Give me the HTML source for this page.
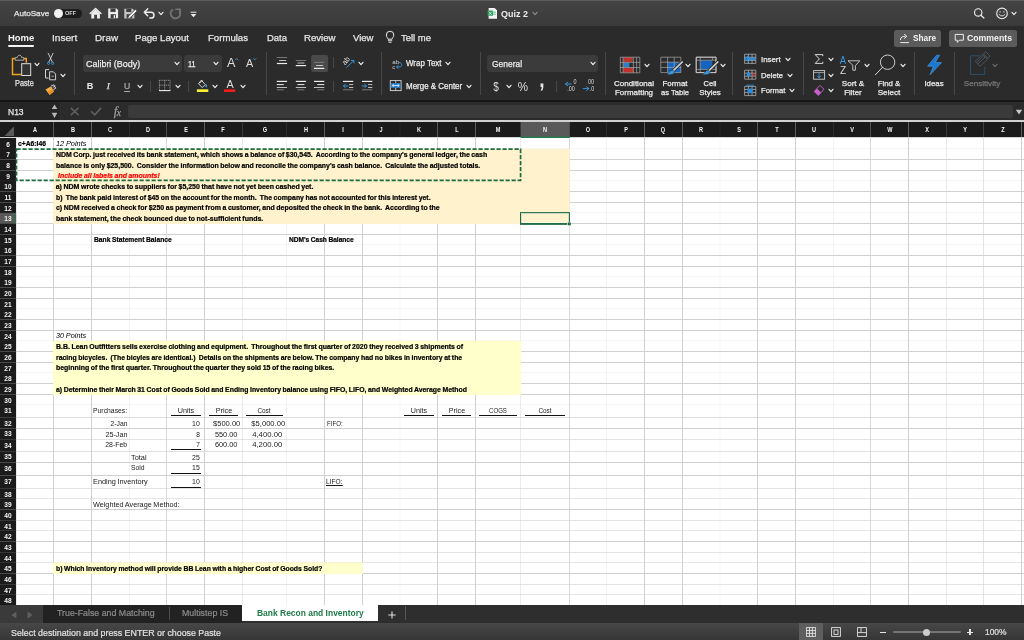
<!DOCTYPE html>
<html lang="en">
<head>
<meta charset="utf-8">
<title>Quiz 2 - Excel</title>
<style>
html,body{margin:0;padding:0;background:#2a2a2a;}
body{width:1024px;height:640px;overflow:hidden;position:relative;font-family:"Liberation Sans", sans-serif;}
#app{position:absolute;left:0;top:0;width:1024px;height:640px;overflow:hidden;will-change:transform;}
.r{position:absolute;display:block;box-sizing:border-box;}
.t{position:absolute;display:block;white-space:pre;margin:0;padding:0;}
</style>
</head>
<body>
<div id="app">
<div class="r" style="left:0.00px;top:0.00px;width:1024.00px;height:26.00px;background:linear-gradient(#444444,#3a3a3a);border-top:1px solid #5c5c5c;"></div>
<span class="t" id="t1" style="top:9.06px;left:13.75px;transform-origin:0 50%;height:10.27px;line-height:10.27px;font-size:7.90px;color:#e4e4e4;font-weight:400;transform:scaleX(1.0287);-webkit-text-stroke:0.25px #e4e4e4;">AutoSave</span>
<div class="r" style="left:53.80px;top:9.00px;width:28.40px;height:8.80px;background:#1d1d1d;border-radius:4.4px;"></div>
<div class="r" style="left:53.90px;top:9.00px;width:8.80px;height:8.80px;background:#f4f4f4;border-radius:4.4px;"></div>
<span class="t" id="t2" style="top:10.09px;left:64.80px;transform-origin:0 50%;height:7.02px;line-height:7.02px;font-size:5.40px;color:#d6d6d6;font-weight:700;transform:scaleX(1.0203);">OFF</span>
<span class="t" id="t3" style="top:8.06px;left:501.30px;transform-origin:0 50%;height:12.48px;line-height:12.48px;font-size:9.60px;color:#ececec;font-weight:700;transform:scaleX(0.9376);">Quiz 2</span>
<svg class="r" style="left:531.50px;top:10.80px;" width="6" height="5" viewBox="0 0 6 5"><path d="M1 1.3 L3 3.6 L5 1.3" fill="none" stroke="#8c8c8c" stroke-width="1.15" stroke-linecap="round" stroke-linejoin="round"/></svg>
<svg class="r" style="left:158.30px;top:11.00px;" width="6" height="5" viewBox="0 0 6 5"><path d="M1 1.3 L3 3.6 L5 1.3" fill="none" stroke="#f0f0f0" stroke-width="1.15" stroke-linecap="round" stroke-linejoin="round"/></svg>
<svg class="r" style="left:1010.90px;top:10.90px;" width="6" height="5" viewBox="0 0 6 5"><path d="M1 1.3 L3 3.6 L5 1.3" fill="none" stroke="#f0f0f0" stroke-width="1.15" stroke-linecap="round" stroke-linejoin="round"/></svg>
<div class="r" style="left:0.00px;top:26.00px;width:1024.00px;height:24.00px;background:#2b2b2b;"></div>
<span class="t" id="t4" style="top:32.46px;left:8.10px;transform-origin:0 50%;height:12.48px;line-height:12.48px;font-size:9.60px;color:#f2f2f2;font-weight:700;transform:scaleX(0.9866);">Home</span>
<span class="t" id="t5" style="top:32.46px;left:51.60px;transform-origin:0 50%;height:12.48px;line-height:12.48px;font-size:9.60px;color:#e6e6e6;font-weight:400;transform:scaleX(1.0542);-webkit-text-stroke:0.25px #e6e6e6;">Insert</span>
<span class="t" id="t6" style="top:32.46px;left:94.60px;transform-origin:0 50%;height:12.48px;line-height:12.48px;font-size:9.60px;color:#e6e6e6;font-weight:400;transform:scaleX(1.0272);-webkit-text-stroke:0.25px #e6e6e6;">Draw</span>
<span class="t" id="t7" style="top:32.46px;left:134.50px;transform-origin:0 50%;height:12.48px;line-height:12.48px;font-size:9.60px;color:#e6e6e6;font-weight:400;transform:scaleX(1.0020);-webkit-text-stroke:0.25px #e6e6e6;">Page Layout</span>
<span class="t" id="t8" style="top:32.46px;left:207.50px;transform-origin:0 50%;height:12.48px;line-height:12.48px;font-size:9.60px;color:#e6e6e6;font-weight:400;transform:scaleX(1.0004);-webkit-text-stroke:0.25px #e6e6e6;">Formulas</span>
<span class="t" id="t9" style="top:32.46px;left:266.50px;transform-origin:0 50%;height:12.48px;line-height:12.48px;font-size:9.60px;color:#e6e6e6;font-weight:400;transform:scaleX(0.9869);-webkit-text-stroke:0.25px #e6e6e6;">Data</span>
<span class="t" id="t10" style="top:32.46px;left:303.50px;transform-origin:0 50%;height:12.48px;line-height:12.48px;font-size:9.60px;color:#e6e6e6;font-weight:400;transform:scaleX(1.0010);-webkit-text-stroke:0.25px #e6e6e6;">Review</span>
<span class="t" id="t11" style="top:32.46px;left:352.50px;transform-origin:0 50%;height:12.48px;line-height:12.48px;font-size:9.60px;color:#e6e6e6;font-weight:400;transform:scaleX(0.9939);-webkit-text-stroke:0.25px #e6e6e6;">View</span>
<span class="t" id="t12" style="top:32.46px;left:401.00px;transform-origin:0 50%;height:12.48px;line-height:12.48px;font-size:9.60px;color:#e6e6e6;font-weight:400;transform:scaleX(0.9871);-webkit-text-stroke:0.25px #e6e6e6;">Tell me</span>
<div class="r" style="left:8.10px;top:44.70px;width:26.30px;height:2.10px;background:#f4f4f4;border-radius:1px;"></div>
<div class="r" style="left:894.30px;top:30.40px;width:47.00px;height:16.30px;background:#5b5b5b;border-radius:2.5px;"></div>
<span class="t" id="t13" style="top:32.91px;left:913.20px;transform-origin:0 50%;height:11.18px;line-height:11.18px;font-size:8.60px;color:#f4f4f4;font-weight:700;transform:scaleX(0.9627);">Share</span>
<div class="r" style="left:948.90px;top:30.40px;width:67.80px;height:16.30px;background:#5b5b5b;border-radius:2.5px;"></div>
<span class="t" id="t14" style="top:32.91px;left:967.20px;transform-origin:0 50%;height:11.18px;line-height:11.18px;font-size:8.60px;color:#f4f4f4;font-weight:700;transform:scaleX(1.0130);">Comments</span>
<div class="r" style="left:0.00px;top:50.00px;width:1024.00px;height:50.50px;background:#2b2b2b;"></div>
<div class="r" style="left:0.00px;top:100.00px;width:1024.00px;height:2.00px;background:#161616;"></div>
<div class="r" style="left:74.00px;top:52.00px;width:1.00px;height:42.50px;background:#474747;"></div>
<div class="r" style="left:266.00px;top:52.00px;width:1.00px;height:42.50px;background:#474747;"></div>
<div class="r" style="left:381.00px;top:52.00px;width:1.00px;height:42.50px;background:#474747;"></div>
<div class="r" style="left:479.90px;top:52.00px;width:1.00px;height:42.50px;background:#474747;"></div>
<div class="r" style="left:605.00px;top:52.00px;width:1.00px;height:42.50px;background:#474747;"></div>
<div class="r" style="left:731.70px;top:52.00px;width:1.00px;height:42.50px;background:#474747;"></div>
<div class="r" style="left:803.00px;top:52.00px;width:1.00px;height:42.50px;background:#474747;"></div>
<div class="r" style="left:914.10px;top:52.00px;width:1.00px;height:42.50px;background:#474747;"></div>
<div class="r" style="left:954.00px;top:52.00px;width:1.00px;height:42.50px;background:#474747;"></div>
<div class="r" style="left:150.00px;top:80.50px;width:1.00px;height:11.50px;background:#474747;"></div>
<div class="r" style="left:187.50px;top:80.50px;width:1.00px;height:11.50px;background:#474747;"></div>
<div class="r" style="left:333.00px;top:80.50px;width:1.00px;height:11.50px;background:#474747;"></div>
<div class="r" style="left:555.70px;top:80.50px;width:1.00px;height:11.50px;background:#474747;"></div>
<div class="r" style="left:333.00px;top:56.50px;width:1.00px;height:11.50px;background:#474747;"></div>
<svg class="r" style="left:33.90px;top:62.30px;" width="6" height="5" viewBox="0 0 6 5"><path d="M1 1.3 L3 3.6 L5 1.3" fill="none" stroke="#f0f0f0" stroke-width="1.15" stroke-linecap="round" stroke-linejoin="round"/></svg>
<svg class="r" style="left:59.60px;top:72.50px;" width="6" height="5" viewBox="0 0 6 5"><path d="M1 1.3 L3 3.6 L5 1.3" fill="none" stroke="#f0f0f0" stroke-width="1.15" stroke-linecap="round" stroke-linejoin="round"/></svg>
<span class="t" id="t15" style="top:78.67px;left:14.50px;transform-origin:0 50%;height:10.66px;line-height:10.66px;font-size:8.20px;color:#e4e4e4;font-weight:400;transform:scaleX(0.8931);-webkit-text-stroke:0.25px #e4e4e4;">Paste</span>
<div class="r" style="left:82.50px;top:55.20px;width:99.00px;height:16.40px;background:#3b3b3b;border-radius:3px;"></div>
<span class="t" id="t16" style="top:58.72px;left:86.30px;transform-origin:0 50%;height:11.96px;line-height:11.96px;font-size:9.20px;color:#ececec;font-weight:400;transform:scaleX(0.9738);-webkit-text-stroke:0.25px #ececec;">Calibri (Body)</span>
<svg class="r" style="left:173.50px;top:61.30px;" width="6" height="5" viewBox="0 0 6 5"><path d="M1 1.3 L3 3.6 L5 1.3" fill="none" stroke="#f0f0f0" stroke-width="1.15" stroke-linecap="round" stroke-linejoin="round"/></svg>
<div class="r" style="left:183.60px;top:55.20px;width:38.00px;height:16.40px;background:#3b3b3b;border-radius:3px;"></div>
<span class="t" id="t17" style="top:58.72px;left:188.00px;transform-origin:0 50%;height:11.96px;line-height:11.96px;font-size:9.20px;color:#ececec;font-weight:400;transform:scaleX(0.7856);-webkit-text-stroke:0.25px #ececec;">11</span>
<svg class="r" style="left:213.00px;top:61.30px;" width="6" height="5" viewBox="0 0 6 5"><path d="M1 1.3 L3 3.6 L5 1.3" fill="none" stroke="#f0f0f0" stroke-width="1.15" stroke-linecap="round" stroke-linejoin="round"/></svg>
<span class="t" id="t18" style="top:81.32px;left:90.00px;transform-origin:50% 50%;height:11.96px;line-height:11.96px;font-size:9.20px;color:#e8e8e8;font-weight:700;transform:translateX(-50%) scaleX(1.0000);">B</span>
<span class="t" id="t19" style="top:81.32px;left:108.20px;transform-origin:50% 50%;height:11.96px;line-height:11.96px;font-size:9.20px;color:#e0e0e0;font-weight:400;font-style:italic;transform:translateX(-50%) scaleX(1.0000);-webkit-text-stroke:0.25px #e0e0e0;font-family:'Liberation Serif',serif;">I</span>
<span class="t" id="t20" style="top:81.41px;left:127.00px;transform-origin:50% 50%;height:11.18px;line-height:11.18px;font-size:8.60px;color:#a8a8a8;font-weight:400;transform:translateX(-50%) scaleX(1.0000);-webkit-text-stroke:0.25px #a8a8a8;">U</span>
<div class="r" style="left:123.70px;top:90.60px;width:6.60px;height:0.80px;background:#a8a8a8;"></div>
<svg class="r" style="left:137.00px;top:84.00px;" width="6" height="5" viewBox="0 0 6 5"><path d="M1 1.3 L3 3.6 L5 1.3" fill="none" stroke="#f0f0f0" stroke-width="1.15" stroke-linecap="round" stroke-linejoin="round"/></svg>
<svg class="r" style="left:174.80px;top:84.00px;" width="6" height="5" viewBox="0 0 6 5"><path d="M1 1.3 L3 3.6 L5 1.3" fill="none" stroke="#f0f0f0" stroke-width="1.15" stroke-linecap="round" stroke-linejoin="round"/></svg>
<svg class="r" style="left:212.00px;top:84.00px;" width="6" height="5" viewBox="0 0 6 5"><path d="M1 1.3 L3 3.6 L5 1.3" fill="none" stroke="#f0f0f0" stroke-width="1.15" stroke-linecap="round" stroke-linejoin="round"/></svg>
<svg class="r" style="left:239.50px;top:84.00px;" width="6" height="5" viewBox="0 0 6 5"><path d="M1 1.3 L3 3.6 L5 1.3" fill="none" stroke="#f0f0f0" stroke-width="1.15" stroke-linecap="round" stroke-linejoin="round"/></svg>
<span class="t" id="t21" style="top:59.17px;left:406.00px;transform-origin:0 50%;height:10.66px;line-height:10.66px;font-size:8.20px;color:#ececec;font-weight:400;transform:scaleX(0.9709);-webkit-text-stroke:0.25px #ececec;">Wrap Text</span>
<svg class="r" style="left:445.00px;top:61.30px;" width="6" height="5" viewBox="0 0 6 5"><path d="M1 1.3 L3 3.6 L5 1.3" fill="none" stroke="#f0f0f0" stroke-width="1.15" stroke-linecap="round" stroke-linejoin="round"/></svg>
<span class="t" id="t22" style="top:81.97px;left:406.00px;transform-origin:0 50%;height:10.66px;line-height:10.66px;font-size:8.20px;color:#ececec;font-weight:400;transform:scaleX(0.9724);-webkit-text-stroke:0.25px #ececec;">Merge &amp; Center</span>
<svg class="r" style="left:465.50px;top:84.00px;" width="6" height="5" viewBox="0 0 6 5"><path d="M1 1.3 L3 3.6 L5 1.3" fill="none" stroke="#f0f0f0" stroke-width="1.15" stroke-linecap="round" stroke-linejoin="round"/></svg>
<svg class="r" style="left:358.00px;top:61.30px;" width="6" height="5" viewBox="0 0 6 5"><path d="M1 1.3 L3 3.6 L5 1.3" fill="none" stroke="#f0f0f0" stroke-width="1.15" stroke-linecap="round" stroke-linejoin="round"/></svg>
<div class="r" style="left:487.40px;top:55.20px;width:110.20px;height:16.40px;background:#3b3b3b;border-radius:3px;"></div>
<span class="t" id="t23" style="top:58.72px;left:492.00px;transform-origin:0 50%;height:11.96px;line-height:11.96px;font-size:9.20px;color:#ececec;font-weight:400;transform:scaleX(0.9178);-webkit-text-stroke:0.25px #ececec;">General</span>
<svg class="r" style="left:589.50px;top:61.30px;" width="6" height="5" viewBox="0 0 6 5"><path d="M1 1.3 L3 3.6 L5 1.3" fill="none" stroke="#f0f0f0" stroke-width="1.15" stroke-linecap="round" stroke-linejoin="round"/></svg>
<span class="t" id="t24" style="top:78.22px;left:495.50px;transform-origin:50% 50%;height:17.55px;line-height:17.55px;font-size:13.50px;color:#dcdcdc;font-weight:400;transform:translateX(-50%) scaleX(0.7400);-webkit-text-stroke:0;">$</span>
<svg class="r" style="left:505.80px;top:84.00px;" width="6" height="5" viewBox="0 0 6 5"><path d="M1 1.3 L3 3.6 L5 1.3" fill="none" stroke="#f0f0f0" stroke-width="1.15" stroke-linecap="round" stroke-linejoin="round"/></svg>
<span class="t" id="t25" style="top:77.62px;left:523.10px;transform-origin:50% 50%;height:17.16px;line-height:17.16px;font-size:13.20px;color:#dcdcdc;font-weight:400;transform:translateX(-50%) scaleX(0.8800);-webkit-text-stroke:0;">%</span>
<span class="t" id="t26" style="top:64.60px;left:541.80px;transform-origin:50% 50%;height:28.00px;line-height:28.00px;font-size:24.00px;color:#e4e4e4;font-weight:700;transform:translateX(-50%) scaleX(0.8000);">,</span>
<span class="t" id="t27" style="top:79.10px;left:634.20px;transform-origin:50% 50%;height:10.40px;line-height:10.40px;font-size:8.00px;color:#ececec;font-weight:400;transform:translateX(-50%) scaleX(0.9992);-webkit-text-stroke:0.25px #ececec;">Conditional</span>
<span class="t" id="t28" style="top:87.60px;left:634.20px;transform-origin:50% 50%;height:10.40px;line-height:10.40px;font-size:8.00px;color:#ececec;font-weight:400;transform:translateX(-50%) scaleX(0.9939);-webkit-text-stroke:0.25px #ececec;">Formatting</span>
<svg class="r" style="left:643.80px;top:62.50px;" width="6" height="5" viewBox="0 0 6 5"><path d="M1 1.3 L3 3.6 L5 1.3" fill="none" stroke="#f0f0f0" stroke-width="1.15" stroke-linecap="round" stroke-linejoin="round"/></svg>
<span class="t" id="t29" style="top:79.10px;left:674.60px;transform-origin:50% 50%;height:10.40px;line-height:10.40px;font-size:8.00px;color:#ececec;font-weight:400;transform:translateX(-50%) scaleX(0.9864);-webkit-text-stroke:0.25px #ececec;">Format</span>
<span class="t" id="t30" style="top:87.60px;left:674.60px;transform-origin:50% 50%;height:10.40px;line-height:10.40px;font-size:8.00px;color:#ececec;font-weight:400;transform:translateX(-50%) scaleX(0.9509);-webkit-text-stroke:0.25px #ececec;">as Table</span>
<svg class="r" style="left:685.00px;top:62.50px;" width="6" height="5" viewBox="0 0 6 5"><path d="M1 1.3 L3 3.6 L5 1.3" fill="none" stroke="#f0f0f0" stroke-width="1.15" stroke-linecap="round" stroke-linejoin="round"/></svg>
<span class="t" id="t31" style="top:79.10px;left:710.00px;transform-origin:50% 50%;height:10.40px;line-height:10.40px;font-size:8.00px;color:#ececec;font-weight:400;transform:translateX(-50%) scaleX(0.9433);-webkit-text-stroke:0.25px #ececec;">Cell</span>
<span class="t" id="t32" style="top:87.60px;left:710.00px;transform-origin:50% 50%;height:10.40px;line-height:10.40px;font-size:8.00px;color:#ececec;font-weight:400;transform:translateX(-50%) scaleX(0.9864);-webkit-text-stroke:0.25px #ececec;">Styles</span>
<svg class="r" style="left:720.00px;top:62.50px;" width="6" height="5" viewBox="0 0 6 5"><path d="M1 1.3 L3 3.6 L5 1.3" fill="none" stroke="#f0f0f0" stroke-width="1.15" stroke-linecap="round" stroke-linejoin="round"/></svg>
<span class="t" id="t33" style="top:55.10px;left:760.80px;transform-origin:0 50%;height:10.40px;line-height:10.40px;font-size:8.00px;color:#ececec;font-weight:400;transform:scaleX(0.9792);-webkit-text-stroke:0.25px #ececec;">Insert</span>
<svg class="r" style="left:784.60px;top:57.10px;" width="6" height="5" viewBox="0 0 6 5"><path d="M1 1.3 L3 3.6 L5 1.3" fill="none" stroke="#f0f0f0" stroke-width="1.15" stroke-linecap="round" stroke-linejoin="round"/></svg>
<span class="t" id="t34" style="top:70.60px;left:760.80px;transform-origin:0 50%;height:10.40px;line-height:10.40px;font-size:8.00px;color:#ececec;font-weight:400;transform:scaleX(0.9514);-webkit-text-stroke:0.25px #ececec;">Delete</span>
<svg class="r" style="left:787.10px;top:72.60px;" width="6" height="5" viewBox="0 0 6 5"><path d="M1 1.3 L3 3.6 L5 1.3" fill="none" stroke="#f0f0f0" stroke-width="1.15" stroke-linecap="round" stroke-linejoin="round"/></svg>
<span class="t" id="t35" style="top:86.10px;left:760.80px;transform-origin:0 50%;height:10.40px;line-height:10.40px;font-size:8.00px;color:#ececec;font-weight:400;transform:scaleX(0.9628);-webkit-text-stroke:0.25px #ececec;">Format</span>
<svg class="r" style="left:789.30px;top:88.10px;" width="6" height="5" viewBox="0 0 6 5"><path d="M1 1.3 L3 3.6 L5 1.3" fill="none" stroke="#f0f0f0" stroke-width="1.15" stroke-linecap="round" stroke-linejoin="round"/></svg>
<svg class="r" style="left:828.00px;top:56.90px;" width="6" height="5" viewBox="0 0 6 5"><path d="M1 1.3 L3 3.6 L5 1.3" fill="none" stroke="#f0f0f0" stroke-width="1.15" stroke-linecap="round" stroke-linejoin="round"/></svg>
<svg class="r" style="left:828.00px;top:72.60px;" width="6" height="5" viewBox="0 0 6 5"><path d="M1 1.3 L3 3.6 L5 1.3" fill="none" stroke="#f0f0f0" stroke-width="1.15" stroke-linecap="round" stroke-linejoin="round"/></svg>
<svg class="r" style="left:828.00px;top:88.10px;" width="6" height="5" viewBox="0 0 6 5"><path d="M1 1.3 L3 3.6 L5 1.3" fill="none" stroke="#f0f0f0" stroke-width="1.15" stroke-linecap="round" stroke-linejoin="round"/></svg>
<span class="t" id="t36" style="top:79.10px;left:853.20px;transform-origin:50% 50%;height:10.40px;line-height:10.40px;font-size:8.00px;color:#ececec;font-weight:400;transform:translateX(-50%) scaleX(1.0119);-webkit-text-stroke:0.25px #ececec;">Sort &amp;</span>
<span class="t" id="t37" style="top:87.60px;left:853.20px;transform-origin:50% 50%;height:10.40px;line-height:10.40px;font-size:8.00px;color:#ececec;font-weight:400;transform:translateX(-50%) scaleX(0.9786);-webkit-text-stroke:0.25px #ececec;">Filter</span>
<svg class="r" style="left:863.80px;top:62.50px;" width="6" height="5" viewBox="0 0 6 5"><path d="M1 1.3 L3 3.6 L5 1.3" fill="none" stroke="#f0f0f0" stroke-width="1.15" stroke-linecap="round" stroke-linejoin="round"/></svg>
<span class="t" id="t38" style="top:79.10px;left:888.70px;transform-origin:50% 50%;height:10.40px;line-height:10.40px;font-size:8.00px;color:#ececec;font-weight:400;transform:translateX(-50%) scaleX(0.9773);-webkit-text-stroke:0.25px #ececec;">Find &amp;</span>
<span class="t" id="t39" style="top:87.60px;left:888.70px;transform-origin:50% 50%;height:10.40px;line-height:10.40px;font-size:8.00px;color:#ececec;font-weight:400;transform:translateX(-50%) scaleX(1.0164);-webkit-text-stroke:0.25px #ececec;">Select</span>
<svg class="r" style="left:899.50px;top:62.50px;" width="6" height="5" viewBox="0 0 6 5"><path d="M1 1.3 L3 3.6 L5 1.3" fill="none" stroke="#f0f0f0" stroke-width="1.15" stroke-linecap="round" stroke-linejoin="round"/></svg>
<span class="t" id="t40" style="top:79.10px;left:934.00px;transform-origin:50% 50%;height:10.40px;line-height:10.40px;font-size:8.00px;color:#ececec;font-weight:400;transform:translateX(-50%) scaleX(0.9756);-webkit-text-stroke:0.25px #ececec;">Ideas</span>
<span class="t" id="t41" style="top:79.10px;left:982.00px;transform-origin:50% 50%;height:10.40px;line-height:10.40px;font-size:8.00px;color:#777777;font-weight:400;transform:translateX(-50%) scaleX(1.0134);-webkit-text-stroke:0.25px #777777;">Sensitivity</span>
<svg class="r" style="left:991.70px;top:62.50px;" width="6" height="5" viewBox="0 0 6 5"><path d="M1 1.3 L3 3.6 L5 1.3" fill="none" stroke="#6a6a6a" stroke-width="1.15" stroke-linecap="round" stroke-linejoin="round"/></svg>
<div class="r" style="left:0.00px;top:102.00px;width:1024.00px;height:18.00px;background:#2b2b2b;"></div>
<div class="r" style="left:0.00px;top:102.00px;width:60.40px;height:18.00px;background:#252525;"></div>
<span class="t" id="t42" style="top:106.71px;left:7.60px;transform-origin:0 50%;height:11.18px;line-height:11.18px;font-size:8.60px;color:#e6e6e6;font-weight:400;transform:scaleX(0.9895);-webkit-text-stroke:0.25px #e6e6e6;">N13</span>
<div class="r" style="left:60.00px;top:102.00px;width:0.80px;height:18.00px;background:#303030;"></div>
<svg class="r" style="left:51.00px;top:104.00px;" width="7" height="15" viewBox="0 0 7 15"><path d="M0.7 4.9 L3.5 0.6 L6.3 4.9Z M0.7 8.7 L3.5 14 L6.3 8.7Z" fill="#b4b4b4"/></svg>
<svg class="r" style="left:70.20px;top:106.80px;" width="9.4" height="9" viewBox="0 0 9.4 9"><path d="M1.4 1.3 L8 7.7 M8 1.3 L1.4 7.7" stroke="#5c5c5c" stroke-width="1.8" fill="none" stroke-linecap="round"/></svg>
<svg class="r" style="left:90.00px;top:106.80px;" width="12" height="9" viewBox="0 0 12 9"><path d="M1.6 4.8 L4.8 7.8 L10.6 1.3" stroke="#5c5c5c" stroke-width="1.8" fill="none" stroke-linecap="round" stroke-linejoin="round"/></svg>
<span class="t" id="t43" style="top:102.95px;left:117.60px;transform-origin:50% 50%;height:16.90px;line-height:16.90px;font-size:13.00px;color:#9c9c9c;font-weight:400;transform:translateX(-50%) scaleX(1.0000);-webkit-text-stroke:0.25px #9c9c9c;font-family:'Liberation Serif',serif;font-style:italic;"><i>f</i><span style="font-size:9.5px;position:relative;top:1px;left:-0.5px">x</span></span>
<div class="r" style="left:128.40px;top:105.20px;width:884.60px;height:12.40px;background:#3a3a3a;border-radius:2px;"></div>
<svg class="r" style="left:1014.80px;top:108.60px;" width="8" height="6" viewBox="0 0 8 6"><path d="M0.8 0.8 L7.2 0.8 L4 5.4Z" fill="#c8c8c8"/></svg>
<span class="t" id="t44" style="top:54.88px;left:226.60px;transform-origin:0 50%;height:16.64px;line-height:16.64px;font-size:12.80px;color:#dedede;font-weight:400;transform:scaleX(0.9828);">A</span>
<span class="t" id="t45" style="top:57.37px;left:246.00px;transform-origin:0 50%;height:13.26px;line-height:13.26px;font-size:10.20px;color:#dedede;font-weight:400;transform:scaleX(1.0593);">A</span>
<span class="t" id="t46" style="top:77.18px;left:230.00px;transform-origin:50% 50%;height:14.04px;line-height:14.04px;font-size:10.80px;color:#dedede;font-weight:400;transform:translateX(-50%) scaleX(1.0000);">A</span>
<span class="t" id="t47" style="top:55.99px;left:346.20px;transform-origin:50% 50%;height:9.62px;line-height:9.62px;font-size:7.40px;color:#e4e4e4;font-weight:400;transform:translateX(-50%) scaleX(1.0000);transform:translateX(-50%) rotate(-52deg);">ab</span>
<span class="t" id="t48" style="top:57.77px;left:392.20px;transform-origin:0 50%;height:8.06px;line-height:8.06px;font-size:6.20px;color:#cfcfcf;font-weight:400;">ab</span>
<span class="t" id="t49" style="top:62.77px;left:392.20px;transform-origin:0 50%;height:8.06px;line-height:8.06px;font-size:6.20px;color:#cfcfcf;font-weight:400;">c</span>
<span class="t" id="t50" style="top:78.38px;left:574.50px;transform-origin:50% 50%;height:8.84px;line-height:8.84px;font-size:6.80px;color:#d8d8d8;font-weight:400;transform:translateX(-50%) scaleX(0.8000);">0</span>
<span class="t" id="t51" style="top:84.68px;left:571.40px;transform-origin:50% 50%;height:8.84px;line-height:8.84px;font-size:6.80px;color:#d8d8d8;font-weight:400;transform:translateX(-50%) scaleX(0.8000);">.00</span>
<span class="t" id="t52" style="top:78.38px;left:591.20px;transform-origin:50% 50%;height:8.84px;line-height:8.84px;font-size:6.80px;color:#d8d8d8;font-weight:400;transform:translateX(-50%) scaleX(0.8000);">00</span>
<span class="t" id="t53" style="top:84.68px;left:591.80px;transform-origin:50% 50%;height:8.84px;line-height:8.84px;font-size:6.80px;color:#d8d8d8;font-weight:400;transform:translateX(-50%) scaleX(0.8000);">.0</span>
<span class="t" id="t54" style="top:52.85px;left:843.20px;transform-origin:50% 50%;height:14.30px;line-height:14.30px;font-size:11.00px;color:#3a96dd;font-weight:400;transform:translateX(-50%) scaleX(0.8600);">A</span>
<span class="t" id="t55" style="top:63.05px;left:843.20px;transform-origin:50% 50%;height:14.30px;line-height:14.30px;font-size:11.00px;color:#d8d8d8;font-weight:400;transform:translateX(-50%) scaleX(0.9200);">Z</span>
<svg class="r" style="left:0;top:0" width="1024" height="640" viewBox="0 0 1024 640"><path d="M90.2 13.4 L95.6 8.4 L101 13.4" fill="none" stroke="#ececec" stroke-width="1.4" stroke-linecap="round" stroke-linejoin="round"/><path d="M91.3 13.2 L95.6 9.4 L99.9 13.2 V18.4 H97 V14.8 H94.2 V18.4 H91.3Z" fill="#ececec" stroke="none" stroke-width="0" /><path d="M108.2 8.5 H116.6 L118.1 10 V18.2 H108.2Z" fill="#ececec" stroke="none" stroke-width="0" /><rect x="110.40" y="8.50" width="5.20" height="3.40" fill="#3e3e3e" stroke="none" stroke-width="1.0" rx="0" /><rect x="110.60" y="14.20" width="5.20" height="4.00" fill="#3e3e3e" stroke="none" stroke-width="1.0" rx="0" /><rect x="113.70" y="15.20" width="1.30" height="3.00" fill="#ececec" stroke="none" stroke-width="1.0" rx="0" /><path d="M124.3 8.8 H132.6 L134.4 10.6 V18.4 H124.3Z" fill="#c4c4c4" stroke="none" stroke-width="0" /><rect x="126.30" y="8.80" width="5.00" height="3.20" fill="#3e3e3e" stroke="none" stroke-width="1.0" rx="0" /><rect x="126.60" y="14.20" width="5.60" height="4.20" fill="#3e3e3e" stroke="none" stroke-width="1.0" rx="0" /><path d="M128.8 17.6 L129.6 15 L135.4 9.2 L137.2 11 L131.4 16.8Z" fill="#f4f4f4" stroke="#3e3e3e" stroke-width="0.9" /><path d="M128.3 18.2 L129.3 15.2 L131.2 17.1Z" fill="#f4f4f4" stroke="none" stroke-width="0" /><path d="M147.6 8.9 L144.3 12.3 L147.6 15.7" fill="none" stroke="#ececec" stroke-width="1.5" stroke-linecap="round" stroke-linejoin="round"/><path d="M144.6 12.3 H151.1 A2.85 2.85 0 0 1 151.1 18 H149.8" fill="none" stroke="#ececec" stroke-width="1.5" stroke-linecap="round" stroke-linejoin="round"/><path d="M172.4 10 A4.7 4.7 0 1 0 180 12.6 L180 9.4" fill="none" stroke="#737373" stroke-width="1.7" stroke-linecap="round" stroke-linejoin="round"/><path d="M175.9 9.3 H180.1 V13.2" fill="none" stroke="#737373" stroke-width="1.6" stroke-linecap="round" stroke-linejoin="round"/><rect x="190.60" y="11.70" width="5.80" height="1.00" fill="#ececec" stroke="none" stroke-width="1.0" rx="0" /><path d="M190.6 14 H196.4 L193.5 17.2Z" fill="#ececec" stroke="none" stroke-width="0" /><path d="M488.6 7.9 H494.6 L497 10.3 V18.8 H488.6Z" fill="#f4f4f4" stroke="none" stroke-width="0" /><rect x="487.60" y="10.60" width="5.40" height="5.20" fill="#2f9b63" stroke="none" stroke-width="1.0" rx="0.6" /><rect x="493.20" y="11.60" width="2.60" height="1.40" fill="#7fcfa4" stroke="none" stroke-width="1.0" rx="0" /><rect x="493.20" y="13.60" width="2.60" height="1.40" fill="#7fcfa4" stroke="none" stroke-width="1.0" rx="0" /><path d="M489 11.8 L491.6 14.8 M491.6 11.8 L489 14.8" fill="none" stroke="#e8fff2" stroke-width="0.7" /><circle cx="978.20" cy="12.40" r="3.70" fill="none" stroke="#ececec" stroke-width="1.15"/><path d="M980.9 15.2 L983.9 18" fill="none" stroke="#ececec" stroke-width="1.2" stroke-linecap="round" stroke-linejoin="round"/><circle cx="1002.00" cy="13.40" r="5.30" fill="none" stroke="#ececec" stroke-width="1.1"/><circle cx="1000.10" cy="11.90" r="0.65" fill="#ececec" stroke="none" stroke-width="1.0"/><circle cx="1003.90" cy="11.90" r="0.65" fill="#ececec" stroke="none" stroke-width="1.0"/><path d="M999.2 14.6 Q1002 17.6 1004.8 14.6" fill="none" stroke="#ececec" stroke-width="0.9" stroke-linecap="round" stroke-linejoin="round"/><path d="M388 39.2 C388 37.8 386.3 37 386.3 35 A3.75 3.75 0 0 1 393.8 35 C393.8 37 392.1 37.8 392.1 39.2 Z" fill="none" stroke="#ececec" stroke-width="1.0" /><path d="M388.3 40.7 H391.8 M389 42.3 H391.1" fill="none" stroke="#ececec" stroke-width="0.9" stroke-linecap="round" stroke-linejoin="round"/><path d="M900.4 39.6 C900.6 37 902.6 36.3 905 36.3" fill="none" stroke="#ececec" stroke-width="1.0" stroke-linecap="round" stroke-linejoin="round"/><path d="M904.4 34.4 L906.9 36.3 L904.4 38.3" fill="none" stroke="#ececec" stroke-width="1.0" stroke-linecap="round" stroke-linejoin="round"/><path d="M900.6 42.6 H908.6" fill="none" stroke="#ececec" stroke-width="1.0" stroke-linecap="round" stroke-linejoin="round"/><path d="M955.6 34.4 H963.4 V40.2 H959.3 L957.3 42.4 V40.2 H955.6Z" fill="none" stroke="#ececec" stroke-width="1.0" stroke-linecap="round" stroke-linejoin="round"/><path d="M15.4 58.6 H12.5 V74.4 H21" fill="none" stroke="#f5a21d" stroke-width="1.5" /><path d="M23.4 58.6 H26.3 V62.8" fill="none" stroke="#f5a21d" stroke-width="1.5" /><path d="M15.2 60.2 V58.2 C15.2 57.6 15.6 57.4 16.2 57.4 H17.4 C17.4 54.6 21.6 54.6 21.6 57.4 H22.8 C23.4 57.4 23.8 57.6 23.8 58.2 V60.2Z" fill="#2b2b2b" stroke="#bdbdbd" stroke-width="0.9" /><rect x="21.70" y="63.70" width="9.00" height="11.80" fill="#333333" stroke="#e4e4e4" stroke-width="0.95" rx="0" /><path d="M48.2 53.3 L52.3 62 M53 53.3 L48.9 62" fill="none" stroke="#d6d6d6" stroke-width="0.9" stroke-linecap="round" stroke-linejoin="round"/><circle cx="48.60" cy="63.30" r="1.15" fill="none" stroke="#3a96dd" stroke-width="0.9"/><circle cx="52.60" cy="63.30" r="1.15" fill="none" stroke="#3a96dd" stroke-width="0.9"/><path d="M49.2 69.6 H45.5 V78 H48.6" fill="none" stroke="#dcdcdc" stroke-width="0.95" /><path d="M49.6 71.8 H53.4 L55.6 74 V79.8 H49.6Z" fill="none" stroke="#dcdcdc" stroke-width="0.95" /><path d="M51.4 76.2 H53.8" fill="none" stroke="#b0b0b0" stroke-width="0.9" /><path d="M45.5 89.4 L51.2 86.2 L54 91.6 L49.6 95Z" fill="#f2b04a" stroke="none" stroke-width="0" /><path d="M47.8 91.4 L52.6 89.2 L53.6 91.4 L49.8 94.4Z" fill="#ef8e1c" stroke="none" stroke-width="0" /><path d="M51 86 L53.6 84.8 L55.8 88.2 L53.4 89.6" fill="#3a3a3a" stroke="#e6e6e6" stroke-width="0.9" /><path d="M53.2 87.6 L55.2 85.2" fill="none" stroke="#e6e6e6" stroke-width="0.8" /><path d="M235.4 59.9 L236.7 58.5 L238 59.9" fill="none" stroke="#3a96dd" stroke-width="0.9" stroke-linecap="round" stroke-linejoin="round"/><path d="M253.4 58.5 L254.7 59.9 L256 58.5" fill="none" stroke="#3a96dd" stroke-width="0.9" stroke-linecap="round" stroke-linejoin="round"/><path d="M159.4 80.3 H170 M159.4 85.2 H170 M159.4 80.3 V90 M170 80.3 V90 M164.7 80.3 V90" fill="none" stroke="#bdbdbd" stroke-width="0.8" stroke-dasharray="1.1 1"/><path d="M159 90.6 H170.4" fill="none" stroke="#ececec" stroke-width="1.1" /><path d="M201.6 80.4 L205.2 84.6 L202.2 87.6 L198.8 84 Z" fill="none" stroke="#e2e2e2" stroke-width="0.9" stroke-linecap="round" stroke-linejoin="round"/><path d="M199.4 83 L203 80.6" fill="none" stroke="#e2e2e2" stroke-width="0.8" /><path d="M206.3 84 C207.6 85.6 207.6 87.4 206.3 87.4 C205 87.4 205 85.6 206.3 84Z" fill="#3a96dd" stroke="none" stroke-width="0" /><rect x="196.90" y="89.30" width="11.40" height="2.70" fill="#f6f032" stroke="none" stroke-width="1.0" rx="0" /><rect x="223.90" y="89.30" width="11.30" height="2.70" fill="#ee1c1c" stroke="none" stroke-width="1.0" rx="0" /><rect x="311.10" y="54.90" width="17.00" height="17.00" fill="#4a4a4a" stroke="none" stroke-width="1.0" rx="2.2" /><path d="M276.80 57.50H287.10" fill="none" stroke="#8c8c8c" stroke-width="0.8" /><path d="M279.10 60.50H286.20" fill="none" stroke="#c4c4c4" stroke-width="1.0" /><path d="M276.80 63.50H287.10" fill="none" stroke="#ececec" stroke-width="1.2" /><path d="M295.80 60.50H306.10" fill="none" stroke="#8c8c8c" stroke-width="0.8" /><path d="M297.40 63.00H304.40" fill="none" stroke="#c4c4c4" stroke-width="1.0" /><path d="M295.80 65.60H306.10" fill="none" stroke="#ececec" stroke-width="1.2" /><path d="M314.00 62.30H324.30" fill="none" stroke="#8c8c8c" stroke-width="0.8" /><path d="M316.20 65.50H323.20" fill="none" stroke="#c4c4c4" stroke-width="1.0" /><path d="M314.00 68.40H324.30" fill="none" stroke="#ececec" stroke-width="1.2" /><path d="M276.80 81.40H287.10" fill="none" stroke="#ececec" stroke-width="1.2" /><path d="M276.80 84.60H283.80" fill="none" stroke="#ececec" stroke-width="1.0" /><path d="M276.80 87.50H287.10" fill="none" stroke="#bdbdbd" stroke-width="1.0" /><path d="M276.80 89.80H283.80" fill="none" stroke="#8c8c8c" stroke-width="0.8" /><path d="M295.80 81.40H306.10" fill="none" stroke="#ececec" stroke-width="1.2" /><path d="M297.40 84.60H304.40" fill="none" stroke="#ececec" stroke-width="1.0" /><path d="M295.80 87.50H306.10" fill="none" stroke="#bdbdbd" stroke-width="1.0" /><path d="M297.40 89.80H304.40" fill="none" stroke="#8c8c8c" stroke-width="0.8" /><path d="M314.00 81.40H324.30" fill="none" stroke="#ececec" stroke-width="1.2" /><path d="M317.30 84.60H324.30" fill="none" stroke="#ececec" stroke-width="1.0" /><path d="M314.00 87.50H324.30" fill="none" stroke="#bdbdbd" stroke-width="1.0" /><path d="M317.30 89.80H324.30" fill="none" stroke="#8c8c8c" stroke-width="0.8" /><path d="M346.6 67.5 L353.7 60.7" fill="none" stroke="#3a96dd" stroke-width="0.95" stroke-linecap="round" stroke-linejoin="round"/><path d="M351.3 60.4 L354 60.4 L354 63" fill="none" stroke="#3a96dd" stroke-width="0.95" stroke-linecap="round" stroke-linejoin="round"/><path d="M343.00 81.4H353.30" fill="none" stroke="#ececec" stroke-width="1.2" /><path d="M349.00 84.6H353.30 M349.00 87.5H353.30" fill="none" stroke="#bdbdbd" stroke-width="1.0" /><path d="M343.00 89.8H353.30" fill="none" stroke="#8c8c8c" stroke-width="0.8" /><path d="M343.60 86H347.80 M345.40 84.2L343.50 86L345.40 87.8" fill="none" stroke="#3a96dd" stroke-width="1.0" stroke-linecap="round" stroke-linejoin="round"/><path d="M362.00 81.4H372.30" fill="none" stroke="#ececec" stroke-width="1.2" /><path d="M368.00 84.6H372.30 M368.00 87.5H372.30" fill="none" stroke="#bdbdbd" stroke-width="1.0" /><path d="M362.00 89.8H372.30" fill="none" stroke="#8c8c8c" stroke-width="0.8" /><path d="M362.20 86H366.40 M364.60 84.2L366.50 86L364.60 87.8" fill="none" stroke="#3a96dd" stroke-width="1.0" stroke-linecap="round" stroke-linejoin="round"/><path d="M399.4 62.6 C402.6 62.6 402.6 67 399.4 67 H396.8" fill="none" stroke="#3a96dd" stroke-width="0.95" stroke-linecap="round" stroke-linejoin="round"/><path d="M398.2 65.4 L396.5 67 L398.2 68.6" fill="none" stroke="#3a96dd" stroke-width="0.95" stroke-linecap="round" stroke-linejoin="round"/><rect x="390.30" y="80.60" width="10.80" height="10.00" fill="none" stroke="#d8d8d8" stroke-width="0.9" rx="0" /><rect x="390.80" y="83.20" width="9.80" height="4.60" fill="#2a7fcf" stroke="none" stroke-width="1.0" rx="0" /><path d="M395.7 80.6V83.2 M395.7 87.8V90.6" fill="none" stroke="#d8d8d8" stroke-width="0.8" /><path d="M392.4 85.5H399 M393.6 84.3L392.3 85.5L393.6 86.7 M397.8 84.3L399.1 85.5L397.8 86.7" fill="none" stroke="#e9f3ff" stroke-width="0.8" stroke-linecap="round" stroke-linejoin="round"/><path d="M567.8 82.2 L565.4 84 L567.8 85.8 M565.6 84H571.2" fill="none" stroke="#3a96dd" stroke-width="0.95" stroke-linecap="round" stroke-linejoin="round"/><path d="M586.6 86.8 L589 88.6 L586.6 90.4 M583.2 88.6H588.8" fill="none" stroke="#3a96dd" stroke-width="0.95" stroke-linecap="round" stroke-linejoin="round"/><rect x="623.20" y="57.30" width="9.40" height="4.60" fill="#c0322d" stroke="none" stroke-width="1.0" rx="0" /><rect x="623.20" y="62.70" width="6.20" height="4.40" fill="#2b7fc6" stroke="none" stroke-width="1.0" rx="0" /><rect x="623.20" y="67.80" width="10.40" height="4.80" fill="#c0322d" stroke="none" stroke-width="1.0" rx="0" /><path d="M620.3 57.2H639.8V72.8H620.3Z M620.3 62.4H639.8 M620.3 67.5H639.8 M623.1 57.2V72.8 M633.3 57.2V72.8 M636.6 57.2V72.8" fill="none" stroke="#a9a9a9" stroke-width="0.7" /><rect x="667.80" y="62.20" width="13.00" height="10.40" fill="#1565c0" stroke="none" stroke-width="1.0" rx="0" /><path d="M660.8 57.2H680.8V72.6H660.8Z M660.8 62.2H680.8 M660.8 67.4H680.8 M667.6 57.2V72.6 M674.2 57.2V72.6" fill="none" stroke="#a9a9a9" stroke-width="0.7" /><path d="M682.20 62.00 L672.60 71.40" fill="none" stroke="#2b2b2b" stroke-width="3.2" stroke-linecap="round"/><path d="M682.20 62.00 L672.60 71.40" fill="none" stroke="#cfcfcf" stroke-width="1.7" stroke-linecap="round"/><path d="M672.90 70.00 C669.60 70.20 669.20 73.40 666.60 74.20 C670.00 75.60 674.40 74.40 674.60 71.80Z" fill="#3a96dd" stroke="#2b2b2b" stroke-width="0.5" /><rect x="700.40" y="60.40" width="11.80" height="8.80" fill="#1565c0" stroke="none" stroke-width="1.0" rx="0" /><path d="M696.2 57.2H716V72.6H696.2Z M696.2 60.2H716 M696.2 69.4H716 M700.2 57.2V72.6 M712.4 57.2V60.2" fill="none" stroke="#a9a9a9" stroke-width="0.7" /><path d="M696.2 57.2H716V72.6H696.2Z" fill="none" stroke="#d0d0d0" stroke-width="0.9" /><path d="M717.80 62.00 L708.20 71.40" fill="none" stroke="#2b2b2b" stroke-width="3.2" stroke-linecap="round"/><path d="M717.80 62.00 L708.20 71.40" fill="none" stroke="#cfcfcf" stroke-width="1.7" stroke-linecap="round"/><path d="M708.50 70.00 C705.20 70.20 704.80 73.40 702.20 74.20 C705.60 75.60 710.00 74.40 710.20 71.80Z" fill="#3a96dd" stroke="#2b2b2b" stroke-width="0.5" /><path d="M744.60 54.20H755.80V63.40H744.60Z M744.60 57.27H755.80 M744.60 60.33H755.80 M748.33 54.20V63.40 M752.07 54.20V63.40" fill="none" stroke="#bdbdbd" stroke-width="0.7" /><path d="M755.4 58.8H747" fill="none" stroke="#2a8fe0" stroke-width="2.4" /><path d="M748.6 55.8L745.2 58.8L748.6 61.8" fill="none" stroke="#2a8fe0" stroke-width="1.2" stroke-linecap="round" stroke-linejoin="round"/><path d="M744.60 70.20H755.80V79.20H744.60Z M744.60 73.20H755.80 M744.60 76.20H755.80 M748.33 70.20V79.20 M752.07 70.20V79.20" fill="none" stroke="#bdbdbd" stroke-width="0.7" /><rect x="746.80" y="72.60" width="3.60" height="3.80" fill="#2a8fe0" stroke="none" stroke-width="1.0" rx="0" /><path d="M752 72.8L755.4 76.4 M755.4 72.8L752 76.4" fill="none" stroke="#e23b3b" stroke-width="0.9" stroke-linecap="round" stroke-linejoin="round"/><path d="M744.60 86.40H755.80V95.60H744.60Z M744.60 89.47H755.80 M744.60 92.53H755.80 M748.33 86.40V95.60 M752.07 86.40V95.60" fill="none" stroke="#bdbdbd" stroke-width="0.7" /><rect x="747.60" y="88.60" width="5.00" height="4.60" fill="#2a8fe0" stroke="none" stroke-width="1.0" rx="0" /><path d="M746.8 86.6V85.2H753.6V86.6" fill="none" stroke="#2a8fe0" stroke-width="0.9" /><path d="M822.8 55.8V54.6H815.2L819.4 59L815.2 63.4H822.8V62.2" fill="none" stroke="#e0e0e0" stroke-width="0.95" stroke-linecap="round" stroke-linejoin="round"/><rect x="813.60" y="70.60" width="11.00" height="8.60" fill="none" stroke="#d0d0d0" stroke-width="0.9" rx="0" /><path d="M813.6 72.6H824.6" fill="none" stroke="#d0d0d0" stroke-width="0.7" /><path d="M819.1 73.4V77.6 M817.3 76L819.1 77.8L820.9 76" fill="none" stroke="#3a96dd" stroke-width="0.95" stroke-linecap="round" stroke-linejoin="round"/><path d="M819.8 85.4L824 89.2L818.4 95.4L814.2 91.6Z" fill="none" stroke="#c65fc8" stroke-width="0.9" /><path d="M816.9 88.6L821.1 92.4L818.4 95.4L814.2 91.6Z" fill="#c65fc8" stroke="none" stroke-width="0" /><path d="M848.4 60.8H859.8L855.4 65.6V70.2H852.8V65.6Z" fill="none" stroke="#d0d0d0" stroke-width="0.9" stroke-linecap="round" stroke-linejoin="round"/><circle cx="887.60" cy="62.20" r="7.20" fill="none" stroke="#d6d6d6" stroke-width="0.95"/><path d="M882.4 67.4L875.4 74.8" fill="none" stroke="#d6d6d6" stroke-width="1.0" stroke-linecap="round" stroke-linejoin="round"/><path d="M936.6 55.2L927.6 66.2H933.4L930 74.8L941.6 62.6H935.2L939.6 55.2Z" fill="#1b78d2" stroke="#4aa3ee" stroke-width="0.6" /><path d="M979.6 55.8H970.6V74.4H984.8V67" fill="none" stroke="#2c5875" stroke-width="0.9" /><path d="M975.2 61.2L982.6 54.4L987.4 59.4L980 66.4Z" fill="#2b2b2b" stroke="#4c5a64" stroke-width="0.9" /><path d="M976.6 62.4L983.6 55.8 M978 64L985 57.2" fill="none" stroke="#4c5a64" stroke-width="0.8" /><path d="M983.4 53.6L985.8 51.6L990 56L987.8 58.2Z" fill="none" stroke="#4c5a64" stroke-width="0.9" /></svg>
<div class="r" style="left:0.00px;top:120.00px;width:1024.00px;height:2.00px;background:#d2d2d2;"></div>
<div class="r" style="left:0.00px;top:122.00px;width:1024.00px;height:15.00px;background:#1b1b1b;"></div>
<div class="r" style="left:0.00px;top:137.00px;width:1024.00px;height:1.00px;background:#d4d4d4;"></div>
<div class="r" style="left:16.00px;top:138.00px;width:1008.00px;height:468.00px;background:#ffffff;"></div>
<div class="r" style="left:0.00px;top:138.00px;width:16.00px;height:468.00px;background:#1b1b1b;"></div>
<svg class="r" style="left:0;top:0" width="1024" height="640" viewBox="0 0 1024 640" shape-rendering="crispEdges"><rect x="0" y="138" width="16" height="468" fill="#1b1b1b"/><rect x="16" y="138" width="1" height="468" fill="#1b1b1b" opacity="0.09"/></svg>
<svg class="r" style="left:4.00px;top:125.60px;" width="10.2" height="10.6" viewBox="0 0 10.2 10.6"><path d="M10.2 0 L10.2 10.6 L0 10.6Z" fill="#5a5a5a"/></svg>
<svg class="r" style="left:0;top:0" width="1024" height="640" viewBox="0 0 1024 640" shape-rendering="crispEdges"><rect x="521" y="122" width="48" height="15" fill="#595959"/><rect x="520" y="136" width="1" height="1" fill="#1f7a4a" opacity="0.17"/><rect x="520" y="137" width="1" height="1" fill="#1f7a4a" opacity="0.41"/><rect x="521" y="136" width="48" height="1" fill="#1f7a4a" opacity="0.41"/><rect x="521" y="137" width="48" height="1" fill="#1f7a4a"/><rect x="569" y="136" width="1" height="1" fill="#1f7a4a" opacity="0.32"/><rect x="569" y="137" width="1" height="1" fill="#1f7a4a" opacity="0.78"/><rect x="0" y="213" width="15" height="1" fill="#595959" opacity="0.97"/><rect x="0" y="214" width="15" height="9" fill="#595959"/><rect x="15" y="213" width="1" height="1" fill="#595959" opacity="0.88"/><rect x="15" y="214" width="1" height="9" fill="#595959" opacity="0.91"/><rect x="15" y="212" width="1" height="1" fill="#1f7a4a" opacity="0.16"/><rect x="15" y="213" width="1" height="11" fill="#1f7a4a"/><rect x="16" y="212" width="1" height="1" fill="#1f7a4a" opacity="0.01"/><rect x="16" y="213" width="1" height="11" fill="#1f7a4a" opacity="0.09"/><rect x="15" y="122" width="2" height="15" fill="#303030" opacity="0.09"/><rect x="53" y="122" width="1" height="15" fill="#5c5c5c" opacity="0.97"/><rect x="91" y="122" width="1" height="15" fill="#5c5c5c"/><rect x="129" y="122" width="1" height="15" fill="#5c5c5c" opacity="0.28"/><rect x="166" y="122" width="1" height="15" fill="#5c5c5c" opacity="0.78"/><rect x="204" y="122" width="1" height="15" fill="#5c5c5c"/><rect x="242" y="122" width="1" height="15" fill="#5c5c5c" opacity="0.47"/><rect x="286" y="122" width="1" height="15" fill="#5c5c5c" opacity="0.28"/><rect x="324" y="122" width="1" height="15" fill="#5c5c5c"/><rect x="362" y="122" width="1" height="15" fill="#5c5c5c" opacity="0.97"/><rect x="399" y="122" width="2" height="15" fill="#5c5c5c" opacity="0.09"/><rect x="437" y="122" width="1" height="15" fill="#5c5c5c" opacity="0.97"/><rect x="475" y="122" width="1" height="15" fill="#5c5c5c"/><rect x="520" y="122" width="1" height="15" fill="#5c5c5c" opacity="0.41"/><rect x="569" y="122" width="1" height="15" fill="#5c5c5c" opacity="0.78"/><rect x="606" y="122" width="1" height="15" fill="#5c5c5c" opacity="0.28"/><rect x="644" y="122" width="1" height="15" fill="#5c5c5c"/><rect x="682" y="122" width="1" height="15" fill="#5c5c5c" opacity="0.97"/><rect x="719" y="122" width="2" height="15" fill="#5c5c5c" opacity="0.09"/><rect x="757" y="122" width="1" height="15" fill="#5c5c5c" opacity="0.97"/><rect x="795" y="122" width="1" height="15" fill="#5c5c5c"/><rect x="833" y="122" width="1" height="15" fill="#5c5c5c" opacity="0.28"/><rect x="870" y="122" width="1" height="15" fill="#5c5c5c" opacity="0.78"/><rect x="908" y="122" width="1" height="15" fill="#5c5c5c"/><rect x="946" y="122" width="1" height="15" fill="#5c5c5c" opacity="0.47"/><rect x="983" y="122" width="1" height="15" fill="#5c5c5c" opacity="0.59"/><rect x="1021" y="122" width="1" height="15" fill="#5c5c5c"/><rect x="0" y="148" width="15" height="1" fill="#4a4a4a" opacity="0.16"/><rect x="0" y="149" width="15" height="1" fill="#4a4a4a" opacity="0.03"/><rect x="15" y="148" width="1" height="1" fill="#4a4a4a" opacity="0.15"/><rect x="15" y="149" width="1" height="1" fill="#4a4a4a" opacity="0.03"/><rect x="0" y="159" width="15" height="1" fill="#4a4a4a"/><rect x="15" y="159" width="1" height="1" fill="#4a4a4a" opacity="0.91"/><rect x="0" y="170" width="15" height="1" fill="#4a4a4a" opacity="0.97"/><rect x="15" y="170" width="1" height="1" fill="#4a4a4a" opacity="0.88"/><rect x="0" y="180" width="15" height="1" fill="#4a4a4a" opacity="0.16"/><rect x="0" y="181" width="15" height="1" fill="#4a4a4a" opacity="0.03"/><rect x="15" y="180" width="1" height="1" fill="#4a4a4a" opacity="0.15"/><rect x="15" y="181" width="1" height="1" fill="#4a4a4a" opacity="0.03"/><rect x="0" y="191" width="15" height="1" fill="#4a4a4a"/><rect x="15" y="191" width="1" height="1" fill="#4a4a4a" opacity="0.91"/><rect x="0" y="202" width="15" height="1" fill="#4a4a4a" opacity="0.97"/><rect x="15" y="202" width="1" height="1" fill="#4a4a4a" opacity="0.88"/><rect x="0" y="212" width="15" height="1" fill="#4a4a4a" opacity="0.16"/><rect x="0" y="213" width="15" height="1" fill="#4a4a4a" opacity="0.03"/><rect x="15" y="212" width="1" height="1" fill="#4a4a4a" opacity="0.15"/><rect x="15" y="213" width="1" height="1" fill="#4a4a4a" opacity="0.03"/><rect x="0" y="223" width="15" height="1" fill="#4a4a4a"/><rect x="15" y="223" width="1" height="1" fill="#4a4a4a" opacity="0.91"/><rect x="0" y="234" width="15" height="1" fill="#4a4a4a" opacity="0.97"/><rect x="15" y="234" width="1" height="1" fill="#4a4a4a" opacity="0.88"/><rect x="0" y="244" width="15" height="1" fill="#4a4a4a" opacity="0.16"/><rect x="0" y="245" width="15" height="1" fill="#4a4a4a" opacity="0.03"/><rect x="15" y="244" width="1" height="1" fill="#4a4a4a" opacity="0.15"/><rect x="15" y="245" width="1" height="1" fill="#4a4a4a" opacity="0.03"/><rect x="0" y="255" width="15" height="1" fill="#4a4a4a"/><rect x="15" y="255" width="1" height="1" fill="#4a4a4a" opacity="0.91"/><rect x="0" y="266" width="15" height="1" fill="#4a4a4a" opacity="0.97"/><rect x="15" y="266" width="1" height="1" fill="#4a4a4a" opacity="0.88"/><rect x="0" y="276" width="15" height="1" fill="#4a4a4a" opacity="0.16"/><rect x="0" y="277" width="15" height="1" fill="#4a4a4a" opacity="0.03"/><rect x="15" y="276" width="1" height="1" fill="#4a4a4a" opacity="0.15"/><rect x="15" y="277" width="1" height="1" fill="#4a4a4a" opacity="0.03"/><rect x="0" y="287" width="15" height="1" fill="#4a4a4a"/><rect x="15" y="287" width="1" height="1" fill="#4a4a4a" opacity="0.91"/><rect x="0" y="298" width="15" height="1" fill="#4a4a4a" opacity="0.97"/><rect x="15" y="298" width="1" height="1" fill="#4a4a4a" opacity="0.88"/><rect x="0" y="308" width="15" height="1" fill="#4a4a4a" opacity="0.16"/><rect x="0" y="309" width="15" height="1" fill="#4a4a4a" opacity="0.03"/><rect x="15" y="308" width="1" height="1" fill="#4a4a4a" opacity="0.15"/><rect x="15" y="309" width="1" height="1" fill="#4a4a4a" opacity="0.03"/><rect x="0" y="319" width="15" height="1" fill="#4a4a4a"/><rect x="15" y="319" width="1" height="1" fill="#4a4a4a" opacity="0.91"/><rect x="0" y="330" width="15" height="1" fill="#4a4a4a" opacity="0.97"/><rect x="15" y="330" width="1" height="1" fill="#4a4a4a" opacity="0.88"/><rect x="0" y="340" width="15" height="1" fill="#4a4a4a" opacity="0.16"/><rect x="0" y="341" width="15" height="1" fill="#4a4a4a" opacity="0.03"/><rect x="15" y="340" width="1" height="1" fill="#4a4a4a" opacity="0.15"/><rect x="15" y="341" width="1" height="1" fill="#4a4a4a" opacity="0.03"/><rect x="0" y="351" width="15" height="1" fill="#4a4a4a"/><rect x="15" y="351" width="1" height="1" fill="#4a4a4a" opacity="0.91"/><rect x="0" y="362" width="15" height="1" fill="#4a4a4a" opacity="0.97"/><rect x="15" y="362" width="1" height="1" fill="#4a4a4a" opacity="0.88"/><rect x="0" y="372" width="15" height="1" fill="#4a4a4a" opacity="0.16"/><rect x="0" y="373" width="15" height="1" fill="#4a4a4a" opacity="0.03"/><rect x="15" y="372" width="1" height="1" fill="#4a4a4a" opacity="0.15"/><rect x="15" y="373" width="1" height="1" fill="#4a4a4a" opacity="0.03"/><rect x="0" y="383" width="15" height="1" fill="#4a4a4a"/><rect x="15" y="383" width="1" height="1" fill="#4a4a4a" opacity="0.91"/><rect x="0" y="394" width="15" height="1" fill="#4a4a4a" opacity="0.97"/><rect x="15" y="394" width="1" height="1" fill="#4a4a4a" opacity="0.88"/><rect x="0" y="404" width="15" height="1" fill="#4a4a4a" opacity="0.16"/><rect x="0" y="405" width="15" height="1" fill="#4a4a4a" opacity="0.03"/><rect x="15" y="404" width="1" height="1" fill="#4a4a4a" opacity="0.15"/><rect x="15" y="405" width="1" height="1" fill="#4a4a4a" opacity="0.03"/><rect x="0" y="417" width="15" height="1" fill="#4a4a4a" opacity="0.72"/><rect x="15" y="417" width="1" height="1" fill="#4a4a4a" opacity="0.66"/><rect x="0" y="428" width="15" height="1" fill="#4a4a4a"/><rect x="15" y="428" width="1" height="1" fill="#4a4a4a" opacity="0.91"/><rect x="0" y="439" width="15" height="1" fill="#4a4a4a" opacity="0.59"/><rect x="15" y="439" width="1" height="1" fill="#4a4a4a" opacity="0.54"/><rect x="0" y="451" width="15" height="1" fill="#4a4a4a" opacity="0.66"/><rect x="15" y="451" width="1" height="1" fill="#4a4a4a" opacity="0.60"/><rect x="0" y="462" width="15" height="1" fill="#4a4a4a"/><rect x="15" y="462" width="1" height="1" fill="#4a4a4a" opacity="0.91"/><rect x="0" y="475" width="15" height="1" fill="#4a4a4a"/><rect x="15" y="475" width="1" height="1" fill="#4a4a4a" opacity="0.91"/><rect x="0" y="488" width="15" height="1" fill="#4a4a4a" opacity="0.59"/><rect x="15" y="488" width="1" height="1" fill="#4a4a4a" opacity="0.54"/><rect x="0" y="498" width="15" height="1" fill="#4a4a4a" opacity="0.53"/><rect x="15" y="498" width="1" height="1" fill="#4a4a4a" opacity="0.48"/><rect x="0" y="509" width="15" height="1" fill="#4a4a4a"/><rect x="15" y="509" width="1" height="1" fill="#4a4a4a" opacity="0.91"/><rect x="0" y="520" width="15" height="1" fill="#4a4a4a" opacity="0.59"/><rect x="15" y="520" width="1" height="1" fill="#4a4a4a" opacity="0.54"/><rect x="0" y="530" width="15" height="1" fill="#4a4a4a" opacity="0.53"/><rect x="15" y="530" width="1" height="1" fill="#4a4a4a" opacity="0.48"/><rect x="0" y="541" width="15" height="1" fill="#4a4a4a"/><rect x="15" y="541" width="1" height="1" fill="#4a4a4a" opacity="0.91"/><rect x="0" y="552" width="15" height="1" fill="#4a4a4a" opacity="0.59"/><rect x="15" y="552" width="1" height="1" fill="#4a4a4a" opacity="0.54"/><rect x="0" y="562" width="15" height="1" fill="#4a4a4a" opacity="0.53"/><rect x="15" y="562" width="1" height="1" fill="#4a4a4a" opacity="0.48"/><rect x="0" y="573" width="15" height="1" fill="#4a4a4a"/><rect x="15" y="573" width="1" height="1" fill="#4a4a4a" opacity="0.91"/><rect x="0" y="584" width="15" height="1" fill="#4a4a4a" opacity="0.59"/><rect x="15" y="584" width="1" height="1" fill="#4a4a4a" opacity="0.54"/><rect x="0" y="594" width="15" height="1" fill="#4a4a4a" opacity="0.53"/><rect x="15" y="594" width="1" height="1" fill="#4a4a4a" opacity="0.48"/></svg>
<span class="t" id="t56" style="top:125.68px;left:34.84px;transform-origin:50% 50%;height:8.84px;line-height:8.84px;font-size:6.80px;color:#f4f4f4;font-weight:700;transform:translateX(-50%) scaleX(0.8200);">A</span>
<span class="t" id="t57" style="top:125.68px;left:72.53px;transform-origin:50% 50%;height:8.84px;line-height:8.84px;font-size:6.80px;color:#f4f4f4;font-weight:700;transform:translateX(-50%) scaleX(0.8200);">B</span>
<span class="t" id="t58" style="top:125.68px;left:110.22px;transform-origin:50% 50%;height:8.84px;line-height:8.84px;font-size:6.80px;color:#f4f4f4;font-weight:700;transform:translateX(-50%) scaleX(0.8200);">C</span>
<span class="t" id="t59" style="top:125.68px;left:147.91px;transform-origin:50% 50%;height:8.84px;line-height:8.84px;font-size:6.80px;color:#f4f4f4;font-weight:700;transform:translateX(-50%) scaleX(0.8200);">D</span>
<span class="t" id="t60" style="top:125.68px;left:185.60px;transform-origin:50% 50%;height:8.84px;line-height:8.84px;font-size:6.80px;color:#f4f4f4;font-weight:700;transform:translateX(-50%) scaleX(0.8200);">E</span>
<span class="t" id="t61" style="top:125.68px;left:223.29px;transform-origin:50% 50%;height:8.84px;line-height:8.84px;font-size:6.80px;color:#f4f4f4;font-weight:700;transform:translateX(-50%) scaleX(0.8200);">F</span>
<span class="t" id="t62" style="top:125.68px;left:264.53px;transform-origin:50% 50%;height:8.84px;line-height:8.84px;font-size:6.80px;color:#f4f4f4;font-weight:700;transform:translateX(-50%) scaleX(0.8200);">G</span>
<span class="t" id="t63" style="top:125.68px;left:305.78px;transform-origin:50% 50%;height:8.84px;line-height:8.84px;font-size:6.80px;color:#f4f4f4;font-weight:700;transform:translateX(-50%) scaleX(0.8200);">H</span>
<span class="t" id="t64" style="top:125.68px;left:343.47px;transform-origin:50% 50%;height:8.84px;line-height:8.84px;font-size:6.80px;color:#f4f4f4;font-weight:700;transform:translateX(-50%) scaleX(0.8200);">I</span>
<span class="t" id="t65" style="top:125.68px;left:381.16px;transform-origin:50% 50%;height:8.84px;line-height:8.84px;font-size:6.80px;color:#f4f4f4;font-weight:700;transform:translateX(-50%) scaleX(0.8200);">J</span>
<span class="t" id="t66" style="top:125.68px;left:418.84px;transform-origin:50% 50%;height:8.84px;line-height:8.84px;font-size:6.80px;color:#f4f4f4;font-weight:700;transform:translateX(-50%) scaleX(0.8200);">K</span>
<span class="t" id="t67" style="top:125.68px;left:456.53px;transform-origin:50% 50%;height:8.84px;line-height:8.84px;font-size:6.80px;color:#f4f4f4;font-weight:700;transform:translateX(-50%) scaleX(0.8200);">L</span>
<span class="t" id="t68" style="top:125.68px;left:498.13px;transform-origin:50% 50%;height:8.84px;line-height:8.84px;font-size:6.80px;color:#f4f4f4;font-weight:700;transform:translateX(-50%) scaleX(0.8200);">M</span>
<span class="t" id="t69" style="top:125.68px;left:545.07px;transform-origin:50% 50%;height:8.84px;line-height:8.84px;font-size:6.80px;color:#f4f4f4;font-weight:700;transform:translateX(-50%) scaleX(0.8200);">N</span>
<span class="t" id="t70" style="top:125.68px;left:588.09px;transform-origin:50% 50%;height:8.84px;line-height:8.84px;font-size:6.80px;color:#f4f4f4;font-weight:700;transform:translateX(-50%) scaleX(0.8200);">O</span>
<span class="t" id="t71" style="top:125.68px;left:625.78px;transform-origin:50% 50%;height:8.84px;line-height:8.84px;font-size:6.80px;color:#f4f4f4;font-weight:700;transform:translateX(-50%) scaleX(0.8200);">P</span>
<span class="t" id="t72" style="top:125.68px;left:663.47px;transform-origin:50% 50%;height:8.84px;line-height:8.84px;font-size:6.80px;color:#f4f4f4;font-weight:700;transform:translateX(-50%) scaleX(0.8200);">Q</span>
<span class="t" id="t73" style="top:125.68px;left:701.16px;transform-origin:50% 50%;height:8.84px;line-height:8.84px;font-size:6.80px;color:#f4f4f4;font-weight:700;transform:translateX(-50%) scaleX(0.8200);">R</span>
<span class="t" id="t74" style="top:125.68px;left:738.84px;transform-origin:50% 50%;height:8.84px;line-height:8.84px;font-size:6.80px;color:#f4f4f4;font-weight:700;transform:translateX(-50%) scaleX(0.8200);">S</span>
<span class="t" id="t75" style="top:125.68px;left:776.53px;transform-origin:50% 50%;height:8.84px;line-height:8.84px;font-size:6.80px;color:#f4f4f4;font-weight:700;transform:translateX(-50%) scaleX(0.8200);">T</span>
<span class="t" id="t76" style="top:125.68px;left:814.22px;transform-origin:50% 50%;height:8.84px;line-height:8.84px;font-size:6.80px;color:#f4f4f4;font-weight:700;transform:translateX(-50%) scaleX(0.8200);">U</span>
<span class="t" id="t77" style="top:125.68px;left:851.91px;transform-origin:50% 50%;height:8.84px;line-height:8.84px;font-size:6.80px;color:#f4f4f4;font-weight:700;transform:translateX(-50%) scaleX(0.8200);">V</span>
<span class="t" id="t78" style="top:125.68px;left:889.60px;transform-origin:50% 50%;height:8.84px;line-height:8.84px;font-size:6.80px;color:#f4f4f4;font-weight:700;transform:translateX(-50%) scaleX(0.8200);">W</span>
<span class="t" id="t79" style="top:125.68px;left:927.29px;transform-origin:50% 50%;height:8.84px;line-height:8.84px;font-size:6.80px;color:#f4f4f4;font-weight:700;transform:translateX(-50%) scaleX(0.8200);">X</span>
<span class="t" id="t80" style="top:125.68px;left:964.98px;transform-origin:50% 50%;height:8.84px;line-height:8.84px;font-size:6.80px;color:#f4f4f4;font-weight:700;transform:translateX(-50%) scaleX(0.8200);">Y</span>
<span class="t" id="t81" style="top:125.68px;left:1002.67px;transform-origin:50% 50%;height:8.84px;line-height:8.84px;font-size:6.80px;color:#f4f4f4;font-weight:700;transform:translateX(-50%) scaleX(0.8200);">Z</span>
<span class="t" id="t82" style="top:135.00px;left:8.00px;transform-origin:50% 50%;height:20.00px;line-height:20.00px;font-size:7.30px;color:#f4f4f4;font-weight:700;transform:translateX(-50%) scaleX(0.9000);">6</span>
<span class="t" id="t83" style="top:145.00px;left:8.00px;transform-origin:50% 50%;height:20.00px;line-height:20.00px;font-size:7.30px;color:#f4f4f4;font-weight:700;transform:translateX(-50%) scaleX(0.9000);">7</span>
<span class="t" id="t84" style="top:156.00px;left:8.00px;transform-origin:50% 50%;height:20.00px;line-height:20.00px;font-size:7.30px;color:#f4f4f4;font-weight:700;transform:translateX(-50%) scaleX(0.9000);">8</span>
<span class="t" id="t85" style="top:167.00px;left:8.00px;transform-origin:50% 50%;height:20.00px;line-height:20.00px;font-size:7.30px;color:#f4f4f4;font-weight:700;transform:translateX(-50%) scaleX(0.9000);">9</span>
<span class="t" id="t86" style="top:177.00px;left:8.00px;transform-origin:50% 50%;height:20.00px;line-height:20.00px;font-size:7.30px;color:#f4f4f4;font-weight:700;transform:translateX(-50%) scaleX(0.9000);">10</span>
<span class="t" id="t87" style="top:188.00px;left:8.00px;transform-origin:50% 50%;height:20.00px;line-height:20.00px;font-size:7.30px;color:#f4f4f4;font-weight:700;transform:translateX(-50%) scaleX(0.9000);">11</span>
<span class="t" id="t88" style="top:199.00px;left:8.00px;transform-origin:50% 50%;height:20.00px;line-height:20.00px;font-size:7.30px;color:#f4f4f4;font-weight:700;transform:translateX(-50%) scaleX(0.9000);">12</span>
<span class="t" id="t89" style="top:209.00px;left:8.00px;transform-origin:50% 50%;height:20.00px;line-height:20.00px;font-size:7.30px;color:#f4f4f4;font-weight:700;transform:translateX(-50%) scaleX(0.9000);">13</span>
<span class="t" id="t90" style="top:220.00px;left:8.00px;transform-origin:50% 50%;height:20.00px;line-height:20.00px;font-size:7.30px;color:#f4f4f4;font-weight:700;transform:translateX(-50%) scaleX(0.9000);">14</span>
<span class="t" id="t91" style="top:231.00px;left:8.00px;transform-origin:50% 50%;height:20.00px;line-height:20.00px;font-size:7.30px;color:#f4f4f4;font-weight:700;transform:translateX(-50%) scaleX(0.9000);">15</span>
<span class="t" id="t92" style="top:241.00px;left:8.00px;transform-origin:50% 50%;height:20.00px;line-height:20.00px;font-size:7.30px;color:#f4f4f4;font-weight:700;transform:translateX(-50%) scaleX(0.9000);">16</span>
<span class="t" id="t93" style="top:252.00px;left:8.00px;transform-origin:50% 50%;height:20.00px;line-height:20.00px;font-size:7.30px;color:#f4f4f4;font-weight:700;transform:translateX(-50%) scaleX(0.9000);">17</span>
<span class="t" id="t94" style="top:263.00px;left:8.00px;transform-origin:50% 50%;height:20.00px;line-height:20.00px;font-size:7.30px;color:#f4f4f4;font-weight:700;transform:translateX(-50%) scaleX(0.9000);">18</span>
<span class="t" id="t95" style="top:273.00px;left:8.00px;transform-origin:50% 50%;height:20.00px;line-height:20.00px;font-size:7.30px;color:#f4f4f4;font-weight:700;transform:translateX(-50%) scaleX(0.9000);">19</span>
<span class="t" id="t96" style="top:284.00px;left:8.00px;transform-origin:50% 50%;height:20.00px;line-height:20.00px;font-size:7.30px;color:#f4f4f4;font-weight:700;transform:translateX(-50%) scaleX(0.9000);">20</span>
<span class="t" id="t97" style="top:295.00px;left:8.00px;transform-origin:50% 50%;height:20.00px;line-height:20.00px;font-size:7.30px;color:#f4f4f4;font-weight:700;transform:translateX(-50%) scaleX(0.9000);">21</span>
<span class="t" id="t98" style="top:305.00px;left:8.00px;transform-origin:50% 50%;height:20.00px;line-height:20.00px;font-size:7.30px;color:#f4f4f4;font-weight:700;transform:translateX(-50%) scaleX(0.9000);">22</span>
<span class="t" id="t99" style="top:316.00px;left:8.00px;transform-origin:50% 50%;height:20.00px;line-height:20.00px;font-size:7.30px;color:#f4f4f4;font-weight:700;transform:translateX(-50%) scaleX(0.9000);">23</span>
<span class="t" id="t100" style="top:327.00px;left:8.00px;transform-origin:50% 50%;height:20.00px;line-height:20.00px;font-size:7.30px;color:#f4f4f4;font-weight:700;transform:translateX(-50%) scaleX(0.9000);">24</span>
<span class="t" id="t101" style="top:337.00px;left:8.00px;transform-origin:50% 50%;height:20.00px;line-height:20.00px;font-size:7.30px;color:#f4f4f4;font-weight:700;transform:translateX(-50%) scaleX(0.9000);">25</span>
<span class="t" id="t102" style="top:348.00px;left:8.00px;transform-origin:50% 50%;height:20.00px;line-height:20.00px;font-size:7.30px;color:#f4f4f4;font-weight:700;transform:translateX(-50%) scaleX(0.9000);">26</span>
<span class="t" id="t103" style="top:359.00px;left:8.00px;transform-origin:50% 50%;height:20.00px;line-height:20.00px;font-size:7.30px;color:#f4f4f4;font-weight:700;transform:translateX(-50%) scaleX(0.9000);">27</span>
<span class="t" id="t104" style="top:369.00px;left:8.00px;transform-origin:50% 50%;height:20.00px;line-height:20.00px;font-size:7.30px;color:#f4f4f4;font-weight:700;transform:translateX(-50%) scaleX(0.9000);">28</span>
<span class="t" id="t105" style="top:380.00px;left:8.00px;transform-origin:50% 50%;height:20.00px;line-height:20.00px;font-size:7.30px;color:#f4f4f4;font-weight:700;transform:translateX(-50%) scaleX(0.9000);">29</span>
<span class="t" id="t106" style="top:391.00px;left:8.00px;transform-origin:50% 50%;height:20.00px;line-height:20.00px;font-size:7.30px;color:#f4f4f4;font-weight:700;transform:translateX(-50%) scaleX(0.9000);">30</span>
<span class="t" id="t107" style="top:401.00px;left:8.00px;transform-origin:50% 50%;height:20.00px;line-height:20.00px;font-size:7.30px;color:#f4f4f4;font-weight:700;transform:translateX(-50%) scaleX(0.9000);">31</span>
<span class="t" id="t108" style="top:414.00px;left:8.00px;transform-origin:50% 50%;height:20.00px;line-height:20.00px;font-size:7.30px;color:#f4f4f4;font-weight:700;transform:translateX(-50%) scaleX(0.9000);">32</span>
<span class="t" id="t109" style="top:424.00px;left:8.00px;transform-origin:50% 50%;height:20.00px;line-height:20.00px;font-size:7.30px;color:#f4f4f4;font-weight:700;transform:translateX(-50%) scaleX(0.9000);">33</span>
<span class="t" id="t110" style="top:436.00px;left:8.00px;transform-origin:50% 50%;height:20.00px;line-height:20.00px;font-size:7.30px;color:#f4f4f4;font-weight:700;transform:translateX(-50%) scaleX(0.9000);">34</span>
<span class="t" id="t111" style="top:447.00px;left:8.00px;transform-origin:50% 50%;height:20.00px;line-height:20.00px;font-size:7.30px;color:#f4f4f4;font-weight:700;transform:translateX(-50%) scaleX(0.9000);">35</span>
<span class="t" id="t112" style="top:459.00px;left:8.00px;transform-origin:50% 50%;height:20.00px;line-height:20.00px;font-size:7.30px;color:#f4f4f4;font-weight:700;transform:translateX(-50%) scaleX(0.9000);">36</span>
<span class="t" id="t113" style="top:472.00px;left:8.00px;transform-origin:50% 50%;height:20.00px;line-height:20.00px;font-size:7.30px;color:#f4f4f4;font-weight:700;transform:translateX(-50%) scaleX(0.9000);">37</span>
<span class="t" id="t114" style="top:485.00px;left:8.00px;transform-origin:50% 50%;height:20.00px;line-height:20.00px;font-size:7.30px;color:#f4f4f4;font-weight:700;transform:translateX(-50%) scaleX(0.9000);">38</span>
<span class="t" id="t115" style="top:495.00px;left:8.00px;transform-origin:50% 50%;height:20.00px;line-height:20.00px;font-size:7.30px;color:#f4f4f4;font-weight:700;transform:translateX(-50%) scaleX(0.9000);">39</span>
<span class="t" id="t116" style="top:506.00px;left:8.00px;transform-origin:50% 50%;height:20.00px;line-height:20.00px;font-size:7.30px;color:#f4f4f4;font-weight:700;transform:translateX(-50%) scaleX(0.9000);">40</span>
<span class="t" id="t117" style="top:517.00px;left:8.00px;transform-origin:50% 50%;height:20.00px;line-height:20.00px;font-size:7.30px;color:#f4f4f4;font-weight:700;transform:translateX(-50%) scaleX(0.9000);">41</span>
<span class="t" id="t118" style="top:527.00px;left:8.00px;transform-origin:50% 50%;height:20.00px;line-height:20.00px;font-size:7.30px;color:#f4f4f4;font-weight:700;transform:translateX(-50%) scaleX(0.9000);">42</span>
<span class="t" id="t119" style="top:538.00px;left:8.00px;transform-origin:50% 50%;height:20.00px;line-height:20.00px;font-size:7.30px;color:#f4f4f4;font-weight:700;transform:translateX(-50%) scaleX(0.9000);">43</span>
<span class="t" id="t120" style="top:549.00px;left:8.00px;transform-origin:50% 50%;height:20.00px;line-height:20.00px;font-size:7.30px;color:#f4f4f4;font-weight:700;transform:translateX(-50%) scaleX(0.9000);">44</span>
<span class="t" id="t121" style="top:559.00px;left:8.00px;transform-origin:50% 50%;height:20.00px;line-height:20.00px;font-size:7.30px;color:#f4f4f4;font-weight:700;transform:translateX(-50%) scaleX(0.9000);">45</span>
<span class="t" id="t122" style="top:570.00px;left:8.00px;transform-origin:50% 50%;height:20.00px;line-height:20.00px;font-size:7.30px;color:#f4f4f4;font-weight:700;transform:translateX(-50%) scaleX(0.9000);">46</span>
<span class="t" id="t123" style="top:581.00px;left:8.00px;transform-origin:50% 50%;height:20.00px;line-height:20.00px;font-size:7.30px;color:#f4f4f4;font-weight:700;transform:translateX(-50%) scaleX(0.9000);">47</span>
<span class="t" id="t124" style="top:591.00px;left:8.00px;transform-origin:50% 50%;height:20.00px;line-height:20.00px;font-size:7.30px;color:#f4f4f4;font-weight:700;transform:translateX(-50%) scaleX(0.9000);">48</span>
<svg class="r" style="left:0;top:0" width="1024" height="640" viewBox="0 0 1024 640" shape-rendering="crispEdges"><rect x="53" y="138" width="1" height="468" fill="#d0d0d0" opacity="0.97"/><rect x="91" y="138" width="1" height="468" fill="#d0d0d0"/><rect x="129" y="138" width="1" height="468" fill="#d0d0d0" opacity="0.28"/><rect x="166" y="138" width="1" height="468" fill="#d0d0d0" opacity="0.78"/><rect x="204" y="138" width="1" height="468" fill="#d0d0d0"/><rect x="242" y="138" width="1" height="468" fill="#d0d0d0" opacity="0.47"/><rect x="286" y="138" width="1" height="468" fill="#d0d0d0" opacity="0.28"/><rect x="324" y="138" width="1" height="468" fill="#d0d0d0"/><rect x="362" y="138" width="1" height="468" fill="#d0d0d0" opacity="0.97"/><rect x="399" y="138" width="2" height="468" fill="#d0d0d0" opacity="0.09"/><rect x="437" y="138" width="1" height="468" fill="#d0d0d0" opacity="0.97"/><rect x="475" y="138" width="1" height="468" fill="#d0d0d0"/><rect x="520" y="138" width="1" height="468" fill="#d0d0d0" opacity="0.41"/><rect x="569" y="138" width="1" height="468" fill="#d0d0d0" opacity="0.78"/><rect x="606" y="138" width="1" height="468" fill="#d0d0d0" opacity="0.28"/><rect x="644" y="138" width="1" height="468" fill="#d0d0d0"/><rect x="682" y="138" width="1" height="468" fill="#d0d0d0" opacity="0.97"/><rect x="719" y="138" width="2" height="468" fill="#d0d0d0" opacity="0.09"/><rect x="757" y="138" width="1" height="468" fill="#d0d0d0" opacity="0.97"/><rect x="795" y="138" width="1" height="468" fill="#d0d0d0"/><rect x="833" y="138" width="1" height="468" fill="#d0d0d0" opacity="0.28"/><rect x="870" y="138" width="1" height="468" fill="#d0d0d0" opacity="0.78"/><rect x="908" y="138" width="1" height="468" fill="#d0d0d0"/><rect x="946" y="138" width="1" height="468" fill="#d0d0d0" opacity="0.47"/><rect x="983" y="138" width="1" height="468" fill="#d0d0d0" opacity="0.59"/><rect x="1021" y="138" width="1" height="468" fill="#d0d0d0"/><rect x="16" y="148" width="1" height="1" fill="#d0d0d0" opacity="0.15"/><rect x="16" y="149" width="1" height="1" fill="#d0d0d0" opacity="0.03"/><rect x="17" y="148" width="1014" height="1" fill="#d0d0d0" opacity="0.16"/><rect x="17" y="149" width="1014" height="1" fill="#d0d0d0" opacity="0.03"/><rect x="16" y="159" width="1" height="1" fill="#d0d0d0" opacity="0.91"/><rect x="17" y="159" width="1014" height="1" fill="#d0d0d0"/><rect x="16" y="170" width="1" height="1" fill="#d0d0d0" opacity="0.88"/><rect x="17" y="170" width="1014" height="1" fill="#d0d0d0" opacity="0.97"/><rect x="16" y="180" width="1" height="1" fill="#d0d0d0" opacity="0.15"/><rect x="16" y="181" width="1" height="1" fill="#d0d0d0" opacity="0.03"/><rect x="17" y="180" width="1014" height="1" fill="#d0d0d0" opacity="0.16"/><rect x="17" y="181" width="1014" height="1" fill="#d0d0d0" opacity="0.03"/><rect x="16" y="191" width="1" height="1" fill="#d0d0d0" opacity="0.91"/><rect x="17" y="191" width="1014" height="1" fill="#d0d0d0"/><rect x="16" y="202" width="1" height="1" fill="#d0d0d0" opacity="0.88"/><rect x="17" y="202" width="1014" height="1" fill="#d0d0d0" opacity="0.97"/><rect x="16" y="212" width="1" height="1" fill="#d0d0d0" opacity="0.15"/><rect x="16" y="213" width="1" height="1" fill="#d0d0d0" opacity="0.03"/><rect x="17" y="212" width="1014" height="1" fill="#d0d0d0" opacity="0.16"/><rect x="17" y="213" width="1014" height="1" fill="#d0d0d0" opacity="0.03"/><rect x="16" y="223" width="1" height="1" fill="#d0d0d0" opacity="0.91"/><rect x="17" y="223" width="1014" height="1" fill="#d0d0d0"/><rect x="16" y="234" width="1" height="1" fill="#d0d0d0" opacity="0.88"/><rect x="17" y="234" width="1014" height="1" fill="#d0d0d0" opacity="0.97"/><rect x="16" y="244" width="1" height="1" fill="#d0d0d0" opacity="0.15"/><rect x="16" y="245" width="1" height="1" fill="#d0d0d0" opacity="0.03"/><rect x="17" y="244" width="1014" height="1" fill="#d0d0d0" opacity="0.16"/><rect x="17" y="245" width="1014" height="1" fill="#d0d0d0" opacity="0.03"/><rect x="16" y="255" width="1" height="1" fill="#d0d0d0" opacity="0.91"/><rect x="17" y="255" width="1014" height="1" fill="#d0d0d0"/><rect x="16" y="266" width="1" height="1" fill="#d0d0d0" opacity="0.88"/><rect x="17" y="266" width="1014" height="1" fill="#d0d0d0" opacity="0.97"/><rect x="16" y="276" width="1" height="1" fill="#d0d0d0" opacity="0.15"/><rect x="16" y="277" width="1" height="1" fill="#d0d0d0" opacity="0.03"/><rect x="17" y="276" width="1014" height="1" fill="#d0d0d0" opacity="0.16"/><rect x="17" y="277" width="1014" height="1" fill="#d0d0d0" opacity="0.03"/><rect x="16" y="287" width="1" height="1" fill="#d0d0d0" opacity="0.91"/><rect x="17" y="287" width="1014" height="1" fill="#d0d0d0"/><rect x="16" y="298" width="1" height="1" fill="#d0d0d0" opacity="0.88"/><rect x="17" y="298" width="1014" height="1" fill="#d0d0d0" opacity="0.97"/><rect x="16" y="308" width="1" height="1" fill="#d0d0d0" opacity="0.15"/><rect x="16" y="309" width="1" height="1" fill="#d0d0d0" opacity="0.03"/><rect x="17" y="308" width="1014" height="1" fill="#d0d0d0" opacity="0.16"/><rect x="17" y="309" width="1014" height="1" fill="#d0d0d0" opacity="0.03"/><rect x="16" y="319" width="1" height="1" fill="#d0d0d0" opacity="0.91"/><rect x="17" y="319" width="1014" height="1" fill="#d0d0d0"/><rect x="16" y="330" width="1" height="1" fill="#d0d0d0" opacity="0.88"/><rect x="17" y="330" width="1014" height="1" fill="#d0d0d0" opacity="0.97"/><rect x="16" y="340" width="1" height="1" fill="#d0d0d0" opacity="0.15"/><rect x="16" y="341" width="1" height="1" fill="#d0d0d0" opacity="0.03"/><rect x="17" y="340" width="1014" height="1" fill="#d0d0d0" opacity="0.16"/><rect x="17" y="341" width="1014" height="1" fill="#d0d0d0" opacity="0.03"/><rect x="16" y="351" width="1" height="1" fill="#d0d0d0" opacity="0.91"/><rect x="17" y="351" width="1014" height="1" fill="#d0d0d0"/><rect x="16" y="362" width="1" height="1" fill="#d0d0d0" opacity="0.88"/><rect x="17" y="362" width="1014" height="1" fill="#d0d0d0" opacity="0.97"/><rect x="16" y="372" width="1" height="1" fill="#d0d0d0" opacity="0.15"/><rect x="16" y="373" width="1" height="1" fill="#d0d0d0" opacity="0.03"/><rect x="17" y="372" width="1014" height="1" fill="#d0d0d0" opacity="0.16"/><rect x="17" y="373" width="1014" height="1" fill="#d0d0d0" opacity="0.03"/><rect x="16" y="383" width="1" height="1" fill="#d0d0d0" opacity="0.91"/><rect x="17" y="383" width="1014" height="1" fill="#d0d0d0"/><rect x="16" y="394" width="1" height="1" fill="#d0d0d0" opacity="0.88"/><rect x="17" y="394" width="1014" height="1" fill="#d0d0d0" opacity="0.97"/><rect x="16" y="404" width="1" height="1" fill="#d0d0d0" opacity="0.15"/><rect x="16" y="405" width="1" height="1" fill="#d0d0d0" opacity="0.03"/><rect x="17" y="404" width="1014" height="1" fill="#d0d0d0" opacity="0.16"/><rect x="17" y="405" width="1014" height="1" fill="#d0d0d0" opacity="0.03"/><rect x="16" y="417" width="1" height="1" fill="#d0d0d0" opacity="0.66"/><rect x="17" y="417" width="1014" height="1" fill="#d0d0d0" opacity="0.72"/><rect x="16" y="428" width="1" height="1" fill="#d0d0d0" opacity="0.91"/><rect x="17" y="428" width="1014" height="1" fill="#d0d0d0"/><rect x="16" y="439" width="1" height="1" fill="#d0d0d0" opacity="0.54"/><rect x="17" y="439" width="1014" height="1" fill="#d0d0d0" opacity="0.59"/><rect x="16" y="451" width="1" height="1" fill="#d0d0d0" opacity="0.60"/><rect x="17" y="451" width="1014" height="1" fill="#d0d0d0" opacity="0.66"/><rect x="16" y="462" width="1" height="1" fill="#d0d0d0" opacity="0.91"/><rect x="17" y="462" width="1014" height="1" fill="#d0d0d0"/><rect x="16" y="475" width="1" height="1" fill="#d0d0d0" opacity="0.91"/><rect x="17" y="475" width="1014" height="1" fill="#d0d0d0"/><rect x="16" y="488" width="1" height="1" fill="#d0d0d0" opacity="0.54"/><rect x="17" y="488" width="1014" height="1" fill="#d0d0d0" opacity="0.59"/><rect x="16" y="498" width="1" height="1" fill="#d0d0d0" opacity="0.48"/><rect x="17" y="498" width="1014" height="1" fill="#d0d0d0" opacity="0.53"/><rect x="16" y="509" width="1" height="1" fill="#d0d0d0" opacity="0.91"/><rect x="17" y="509" width="1014" height="1" fill="#d0d0d0"/><rect x="16" y="520" width="1" height="1" fill="#d0d0d0" opacity="0.54"/><rect x="17" y="520" width="1014" height="1" fill="#d0d0d0" opacity="0.59"/><rect x="16" y="530" width="1" height="1" fill="#d0d0d0" opacity="0.48"/><rect x="17" y="530" width="1014" height="1" fill="#d0d0d0" opacity="0.53"/><rect x="16" y="541" width="1" height="1" fill="#d0d0d0" opacity="0.91"/><rect x="17" y="541" width="1014" height="1" fill="#d0d0d0"/><rect x="16" y="552" width="1" height="1" fill="#d0d0d0" opacity="0.54"/><rect x="17" y="552" width="1014" height="1" fill="#d0d0d0" opacity="0.59"/><rect x="16" y="562" width="1" height="1" fill="#d0d0d0" opacity="0.48"/><rect x="17" y="562" width="1014" height="1" fill="#d0d0d0" opacity="0.53"/><rect x="16" y="573" width="1" height="1" fill="#d0d0d0" opacity="0.91"/><rect x="17" y="573" width="1014" height="1" fill="#d0d0d0"/><rect x="16" y="584" width="1" height="1" fill="#d0d0d0" opacity="0.54"/><rect x="17" y="584" width="1014" height="1" fill="#d0d0d0" opacity="0.59"/><rect x="16" y="594" width="1" height="1" fill="#d0d0d0" opacity="0.48"/><rect x="17" y="594" width="1014" height="1" fill="#d0d0d0" opacity="0.53"/></svg>
<svg class="r" style="left:0;top:0" width="1024" height="640" viewBox="0 0 1024 640" shape-rendering="crispEdges"><rect x="53" y="148" width="1" height="1" fill="#fff2cc" opacity="0.16"/><rect x="53" y="149" width="1" height="75" fill="#fff2cc" opacity="0.97"/><rect x="54" y="148" width="515" height="1" fill="#fff2cc" opacity="0.16"/><rect x="54" y="149" width="515" height="75" fill="#fff2cc"/><rect x="569" y="148" width="1" height="1" fill="#fff2cc" opacity="0.12"/><rect x="569" y="149" width="1" height="75" fill="#fff2cc" opacity="0.78"/><rect x="53" y="340" width="1" height="1" fill="#ffffcc" opacity="0.16"/><rect x="53" y="341" width="1" height="53" fill="#ffffcc" opacity="0.97"/><rect x="53" y="394" width="1" height="1" fill="#ffffcc" opacity="0.94"/><rect x="54" y="340" width="467" height="1" fill="#ffffcc" opacity="0.16"/><rect x="54" y="341" width="467" height="53" fill="#ffffcc"/><rect x="54" y="394" width="467" height="1" fill="#ffffcc" opacity="0.97"/><rect x="53" y="562" width="1" height="1" fill="#ffffcc" opacity="0.51"/><rect x="53" y="563" width="1" height="11" fill="#ffffcc" opacity="0.97"/><rect x="54" y="562" width="308" height="1" fill="#ffffcc" opacity="0.53"/><rect x="54" y="563" width="308" height="11" fill="#ffffcc"/><rect x="362" y="562" width="1" height="1" fill="#ffffcc" opacity="0.51"/><rect x="362" y="563" width="1" height="11" fill="#ffffcc" opacity="0.97"/></svg>
<span class="t" id="t125" style="top:134.00px;left:18.00px;transform-origin:0 50%;height:20.00px;line-height:20.00px;font-size:7.00px;color:#000000;font-weight:700;transform:scaleX(0.9655);word-spacing:-0.35px;-webkit-text-stroke:0.22px #000000;">c+A6:I46</span>
<span class="t" id="t126" style="top:134.00px;left:55.60px;transform-origin:0 50%;height:20.00px;line-height:20.00px;font-size:7.00px;color:#000000;font-weight:400;font-style:italic;transform:scaleX(1.0540);word-spacing:-0.35px;">12 Points</span>
<span class="t" id="t127" style="top:145.00px;left:55.70px;transform-origin:0 50%;height:20.00px;line-height:20.00px;font-size:7.00px;color:#000000;font-weight:700;transform:scaleX(0.9908);word-spacing:-0.35px;-webkit-text-stroke:0.22px #000000;">NDM Corp. just received its bank statement, which shows a balance of $30,545.  According to the company's general ledger, the cash</span>
<span class="t" id="t128" style="top:156.00px;left:55.70px;transform-origin:0 50%;height:20.00px;line-height:20.00px;font-size:7.00px;color:#000000;font-weight:700;transform:scaleX(0.9914);word-spacing:-0.35px;-webkit-text-stroke:0.22px #000000;">balance is only $25,500.  Consider the information below and reconcile the company's cash balance.  Calculate the adjusted totals.</span>
<span class="t" id="t129" style="top:166.00px;left:58.30px;transform-origin:0 50%;height:20.00px;line-height:20.00px;font-size:7.00px;color:#ff0000;font-weight:700;font-style:italic;transform:scaleX(0.9935);word-spacing:-0.35px;-webkit-text-stroke:0.22px #ff0000;">Include all labels and amounts!</span>
<span class="t" id="t130" style="top:177.00px;left:55.70px;transform-origin:0 50%;height:20.00px;line-height:20.00px;font-size:7.00px;color:#000000;font-weight:700;transform:scaleX(1.0000);word-spacing:-0.35px;-webkit-text-stroke:0.22px #000000;">a) NDM wrote checks to suppliers for $5,250 that have not yet been cashed yet.</span>
<span class="t" id="t131" style="top:188.00px;left:55.70px;transform-origin:0 50%;height:20.00px;line-height:20.00px;font-size:7.00px;color:#000000;font-weight:700;transform:scaleX(0.9875);word-spacing:-0.35px;-webkit-text-stroke:0.22px #000000;">b)  The bank paid interest of $45 on the account for the month.  The company has not accounted for this interest yet.</span>
<span class="t" id="t132" style="top:198.00px;left:55.70px;transform-origin:0 50%;height:20.00px;line-height:20.00px;font-size:7.00px;color:#000000;font-weight:700;transform:scaleX(0.9948);word-spacing:-0.35px;-webkit-text-stroke:0.22px #000000;">c) NDM received a check for $250 as payment from a customer, and deposited the check in the bank.  According to the</span>
<span class="t" id="t133" style="top:209.00px;left:55.70px;transform-origin:0 50%;height:20.00px;line-height:20.00px;font-size:7.00px;color:#000000;font-weight:700;transform:scaleX(0.9966);word-spacing:-0.35px;-webkit-text-stroke:0.22px #000000;">bank statement, the check bounced due to not-sufficient funds.</span>
<span class="t" id="t134" style="top:230.00px;left:93.70px;transform-origin:0 50%;height:20.00px;line-height:20.00px;font-size:7.00px;color:#000000;font-weight:700;transform:scaleX(0.9593);word-spacing:-0.35px;-webkit-text-stroke:0.22px #000000;">Bank Statement Balance</span>
<span class="t" id="t135" style="top:230.00px;left:288.70px;transform-origin:0 50%;height:20.00px;line-height:20.00px;font-size:7.00px;color:#000000;font-weight:700;transform:scaleX(0.9424);word-spacing:-0.35px;-webkit-text-stroke:0.22px #000000;">NDM's Cash Balance</span>
<span class="t" id="t136" style="top:326.00px;left:55.70px;transform-origin:0 50%;height:20.00px;line-height:20.00px;font-size:7.00px;color:#000000;font-weight:400;font-style:italic;transform:scaleX(1.0470);word-spacing:-0.35px;">30 Points</span>
<span class="t" id="t137" style="top:337.00px;left:55.70px;transform-origin:0 50%;height:20.00px;line-height:20.00px;font-size:7.00px;color:#000000;font-weight:700;transform:scaleX(0.9921);word-spacing:-0.35px;-webkit-text-stroke:0.22px #000000;">B.B. Lean Outfitters sells exercise clothing and equipment.  Throughout the first quarter of 2020 they received 3 shipments of</span>
<span class="t" id="t138" style="top:348.00px;left:55.70px;transform-origin:0 50%;height:20.00px;line-height:20.00px;font-size:7.00px;color:#000000;font-weight:700;transform:scaleX(0.9837);word-spacing:-0.35px;-webkit-text-stroke:0.22px #000000;">racing bicycles.  (The bicyles are identical.)  Details on the shipments are below. The company had no bikes in inventory at the</span>
<span class="t" id="t139" style="top:358.00px;left:55.70px;transform-origin:0 50%;height:20.00px;line-height:20.00px;font-size:7.00px;color:#000000;font-weight:700;transform:scaleX(0.9933);word-spacing:-0.35px;-webkit-text-stroke:0.22px #000000;">beginning of the first quarter. Throughout the quarter they sold 15 of the racing bikes.</span>
<span class="t" id="t140" style="top:380.00px;left:55.70px;transform-origin:0 50%;height:20.00px;line-height:20.00px;font-size:7.00px;color:#000000;font-weight:700;transform:scaleX(0.9835);word-spacing:-0.35px;-webkit-text-stroke:0.22px #000000;">a) Determine their March 31 Cost of Goods Sold and Ending Inventory balance using FIFO, LIFO, and Weighted Average Method</span>
<span class="t" id="t141" style="top:401.00px;left:93.30px;transform-origin:0 50%;height:20.00px;line-height:20.00px;font-size:7.00px;color:#1a1a1a;font-weight:400;transform:scaleX(0.9763);word-spacing:-0.35px;">Purchases:</span>
<span class="t" id="t142" style="top:401.00px;left:185.80px;transform-origin:50% 50%;height:20.00px;line-height:20.00px;font-size:7.00px;color:#1a1a1a;font-weight:400;transform:translateX(-50%) scaleX(1.0280);word-spacing:-0.35px;">Units</span>
<span class="t" id="t143" style="top:401.00px;left:223.70px;transform-origin:50% 50%;height:20.00px;line-height:20.00px;font-size:7.00px;color:#1a1a1a;font-weight:400;transform:translateX(-50%) scaleX(1.0405);word-spacing:-0.35px;">Price</span>
<span class="t" id="t144" style="top:401.00px;left:264.40px;transform-origin:50% 50%;height:20.00px;line-height:20.00px;font-size:7.00px;color:#1a1a1a;font-weight:400;transform:translateX(-50%) scaleX(0.9163);word-spacing:-0.35px;">Cost</span>
<span class="t" id="t145" style="top:401.00px;left:418.80px;transform-origin:50% 50%;height:20.00px;line-height:20.00px;font-size:7.00px;color:#1a1a1a;font-weight:400;transform:translateX(-50%) scaleX(1.0217);word-spacing:-0.35px;">Units</span>
<span class="t" id="t146" style="top:401.00px;left:456.90px;transform-origin:50% 50%;height:20.00px;line-height:20.00px;font-size:7.00px;color:#1a1a1a;font-weight:400;transform:translateX(-50%) scaleX(1.0217);word-spacing:-0.35px;">Price</span>
<span class="t" id="t147" style="top:401.00px;left:498.30px;transform-origin:50% 50%;height:20.00px;line-height:20.00px;font-size:7.00px;color:#1a1a1a;font-weight:400;transform:translateX(-50%) scaleX(0.8630);word-spacing:-0.35px;">COGS</span>
<span class="t" id="t148" style="top:401.00px;left:545.30px;transform-origin:50% 50%;height:20.00px;line-height:20.00px;font-size:7.00px;color:#1a1a1a;font-weight:400;transform:translateX(-50%) scaleX(0.9163);word-spacing:-0.35px;">Cost</span>
<div class="r" style="left:171.40px;top:414.90px;width:29.30px;height:0.80px;background:#111111;"></div>
<div class="r" style="left:208.60px;top:414.90px;width:29.30px;height:0.80px;background:#111111;"></div>
<div class="r" style="left:246.00px;top:414.90px;width:36.70px;height:0.80px;background:#111111;"></div>
<div class="r" style="left:404.00px;top:414.90px;width:30.00px;height:0.80px;background:#111111;"></div>
<div class="r" style="left:441.60px;top:414.90px;width:29.70px;height:0.80px;background:#111111;"></div>
<div class="r" style="left:479.00px;top:414.90px;width:37.90px;height:0.80px;background:#111111;"></div>
<div class="r" style="left:525.30px;top:414.90px;width:39.70px;height:0.80px;background:#111111;"></div>
<span class="t" id="t149" style="top:414.00px;right:896.50px;transform-origin:100% 50%;height:20.00px;line-height:20.00px;font-size:7.00px;color:#1a1a1a;font-weight:400;transform:scaleX(0.9706);word-spacing:-0.35px;">2-Jan</span>
<span class="t" id="t150" style="top:425.00px;right:896.50px;transform-origin:100% 50%;height:20.00px;line-height:20.00px;font-size:7.00px;color:#1a1a1a;font-weight:400;transform:scaleX(1.0277);word-spacing:-0.35px;">25-Jan</span>
<span class="t" id="t151" style="top:435.00px;right:896.50px;transform-origin:100% 50%;height:20.00px;line-height:20.00px;font-size:7.00px;color:#1a1a1a;font-weight:400;transform:scaleX(0.9915);word-spacing:-0.35px;">28-Feb</span>
<span class="t" id="t152" style="top:414.00px;right:823.80px;transform-origin:100% 50%;height:20.00px;line-height:20.00px;font-size:7.00px;color:#1a1a1a;font-weight:400;transform:scaleX(0.9876);word-spacing:-0.35px;">10</span>
<span class="t" id="t153" style="top:425.00px;right:823.80px;transform-origin:100% 50%;height:20.00px;line-height:20.00px;font-size:7.00px;color:#1a1a1a;font-weight:400;transform:scaleX(0.9472);word-spacing:-0.35px;">8</span>
<span class="t" id="t154" style="top:435.00px;right:823.80px;transform-origin:100% 50%;height:20.00px;line-height:20.00px;font-size:7.00px;color:#1a1a1a;font-weight:400;transform:scaleX(0.9472);word-spacing:-0.35px;">7</span>
<div class="r" style="left:171.40px;top:449.00px;width:29.30px;height:0.80px;background:#111111;"></div>
<span class="t" id="t155" style="top:414.00px;right:783.70px;transform-origin:100% 50%;height:20.00px;line-height:20.00px;font-size:7.00px;color:#1a1a1a;font-weight:400;transform:scaleX(1.0785);word-spacing:-0.35px;">$500.00</span>
<span class="t" id="t156" style="top:425.00px;right:786.10px;transform-origin:100% 50%;height:20.00px;line-height:20.00px;font-size:7.00px;color:#1a1a1a;font-weight:400;transform:scaleX(1.0503);word-spacing:-0.35px;">550.00</span>
<span class="t" id="t157" style="top:435.00px;right:786.10px;transform-origin:100% 50%;height:20.00px;line-height:20.00px;font-size:7.00px;color:#1a1a1a;font-weight:400;transform:scaleX(1.0503);word-spacing:-0.35px;">600.00</span>
<span class="t" id="t158" style="top:414.00px;right:739.20px;transform-origin:100% 50%;height:20.00px;line-height:20.00px;font-size:7.00px;color:#1a1a1a;font-weight:400;transform:scaleX(1.0849);word-spacing:-0.35px;">$5,000.00</span>
<span class="t" id="t159" style="top:425.00px;right:741.30px;transform-origin:100% 50%;height:20.00px;line-height:20.00px;font-size:7.00px;color:#1a1a1a;font-weight:400;transform:scaleX(1.1046);word-spacing:-0.35px;">4,400.00</span>
<span class="t" id="t160" style="top:435.00px;right:741.30px;transform-origin:100% 50%;height:20.00px;line-height:20.00px;font-size:7.00px;color:#1a1a1a;font-weight:400;transform:scaleX(1.1046);word-spacing:-0.35px;">4,200.00</span>
<span class="t" id="t161" style="top:414.00px;left:326.90px;transform-origin:0 50%;height:20.00px;line-height:20.00px;font-size:7.00px;color:#1a1a1a;font-weight:400;transform:scaleX(0.8720);word-spacing:-0.35px;">FIFO:</span>
<span class="t" id="t162" style="top:448.00px;left:131.00px;transform-origin:0 50%;height:20.00px;line-height:20.00px;font-size:7.00px;color:#1a1a1a;font-weight:400;transform:scaleX(1.0543);word-spacing:-0.35px;">Total</span>
<span class="t" id="t163" style="top:458.00px;left:131.00px;transform-origin:0 50%;height:20.00px;line-height:20.00px;font-size:7.00px;color:#1a1a1a;font-weight:400;transform:scaleX(0.9703);word-spacing:-0.35px;">Sold</span>
<span class="t" id="t164" style="top:448.00px;right:823.80px;transform-origin:100% 50%;height:20.00px;line-height:20.00px;font-size:7.00px;color:#1a1a1a;font-weight:400;transform:scaleX(0.9876);word-spacing:-0.35px;">25</span>
<span class="t" id="t165" style="top:458.00px;right:823.80px;transform-origin:100% 50%;height:20.00px;line-height:20.00px;font-size:7.00px;color:#1a1a1a;font-weight:400;transform:scaleX(0.9876);word-spacing:-0.35px;">15</span>
<div class="r" style="left:170.70px;top:473.00px;width:30.10px;height:0.80px;background:#111111;"></div>
<span class="t" id="t166" style="top:472.00px;left:93.10px;transform-origin:0 50%;height:20.00px;line-height:20.00px;font-size:7.00px;color:#1a1a1a;font-weight:400;transform:scaleX(1.0462);word-spacing:-0.35px;">Ending Inventory</span>
<span class="t" id="t167" style="top:472.00px;right:823.80px;transform-origin:100% 50%;height:20.00px;line-height:20.00px;font-size:7.00px;color:#1a1a1a;font-weight:400;transform:scaleX(0.9876);word-spacing:-0.35px;">10</span>
<div class="r" style="left:170.70px;top:486.50px;width:30.10px;height:1.30px;background:#111111;"></div>
<span class="t" id="t168" style="top:472.00px;left:326.30px;transform-origin:0 50%;height:20.00px;line-height:20.00px;font-size:7.00px;color:#1a1a1a;font-weight:400;transform:scaleX(0.9477);text-decoration:underline;word-spacing:-0.35px;">LIFO:</span>
<span class="t" id="t169" style="top:495.00px;left:93.10px;transform-origin:0 50%;height:20.00px;line-height:20.00px;font-size:7.00px;color:#1a1a1a;font-weight:400;transform:scaleX(1.0371);word-spacing:-0.35px;">Weighted Average Method:</span>
<span class="t" id="t170" style="top:559.00px;left:55.90px;transform-origin:0 50%;height:20.00px;line-height:20.00px;font-size:7.00px;color:#000000;font-weight:700;transform:scaleX(0.9766);word-spacing:-0.35px;-webkit-text-stroke:0.22px #000000;">b) Which Inventory method will provide BB Lean with a higher Cost of Goods Sold?</span>
<svg class="r" style="left:0;top:0" width="1024" height="640" viewBox="0 0 1024 640"><path d="M16.50 149.20H520.59V180.30H16.50Z" fill="none" stroke="#1d6b40" stroke-width="1.7" stroke-dasharray="4.2 1.8"/></svg>
<svg class="r" style="left:0;top:0" width="1024" height="640" viewBox="0 0 1024 640"><rect x="520.7" y="212.8" width="48.6" height="11" fill="none" stroke="#1d6b40" stroke-width="1.4"/><rect x="521.6" y="213.7" width="46.8" height="9.0" fill="none" stroke="#ffffff" stroke-width="0.5"/><path d="M520 224H569.8" stroke="#1d6b40" stroke-width="1.6"/><rect x="567.1" y="221.9" width="4" height="3.8" fill="#ffffff"/><rect x="567.7" y="222.4" width="3.1" height="2.9" fill="#1d6b40"/></svg>
<div class="r" style="left:0.00px;top:605.00px;width:1024.00px;height:18.20px;background:#2e2e2e;"></div>
<div class="r" style="left:0.00px;top:605.00px;width:43.00px;height:18.20px;background:#3a3a3a;"></div>
<div class="r" style="left:43.00px;top:605.00px;width:199.20px;height:18.20px;background:#222222;"></div>
<svg class="r" style="left:10.60px;top:611.40px;" width="6" height="8" viewBox="0 0 6 8"><path d="M5.4 0.4 L0.5 4 L5.4 7.6Z" fill="#606060"/></svg>
<svg class="r" style="left:26.80px;top:611.40px;" width="6" height="8" viewBox="0 0 6 8"><path d="M0.6 0.4 L5.5 4 L0.6 7.6Z" fill="#606060"/></svg>
<span class="t" id="t171" style="top:607.94px;left:57.40px;transform-origin:0 50%;height:10.92px;line-height:10.92px;font-size:8.40px;color:#8c8c8c;font-weight:400;transform:scaleX(1.0518);-webkit-text-stroke:0.20px #8c8c8c;">True-False and Matching</span>
<div class="r" style="left:169.20px;top:607.00px;width:0.80px;height:13.00px;background:#4c4c4c;"></div>
<span class="t" id="t172" style="top:607.94px;left:182.40px;transform-origin:0 50%;height:10.92px;line-height:10.92px;font-size:8.40px;color:#8c8c8c;font-weight:400;transform:scaleX(1.0533);-webkit-text-stroke:0.20px #8c8c8c;">Multistep IS</span>
<div class="r" style="left:242.20px;top:605.00px;width:135.90px;height:16.00px;background:#ffffff;"></div>
<span class="t" id="t173" style="top:607.94px;left:256.60px;transform-origin:0 50%;height:10.92px;line-height:10.92px;font-size:8.40px;color:#1f7a4a;font-weight:700;transform:scaleX(1.0100);">Bank Recon and Inventory</span>
<svg class="r" style="left:388.40px;top:610.60px;" width="8" height="8" viewBox="0 0 8 8"><path d="M4 0.4V7.6 M0.4 4H7.6" stroke="#dcdcdc" stroke-width="1.15"/></svg>
<div class="r" style="left:405.00px;top:606.00px;width:0.90px;height:14.00px;background:#585858;"></div>
<div class="r" style="left:0.00px;top:623.20px;width:1024.00px;height:16.80px;background:linear-gradient(#474747,#363636);"></div>
<span class="t" id="t174" style="top:627.84px;left:11.00px;transform-origin:0 50%;height:10.92px;line-height:10.92px;font-size:8.40px;color:#e0e0e0;font-weight:400;transform:scaleX(1.0564);-webkit-text-stroke:0.20px #e0e0e0;">Select destination and press ENTER or choose Paste</span>
<div class="r" style="left:798.60px;top:623.20px;width:24.40px;height:16.80px;background:#5e5e5e;"></div>
<span class="t" id="t175" style="top:628.17px;left:985.30px;transform-origin:0 50%;height:10.66px;line-height:10.66px;font-size:8.20px;color:#e0e0e0;font-weight:400;transform:scaleX(1.0261);-webkit-text-stroke:0.20px #e0e0e0;">100%</span>
<div class="r" style="left:892.80px;top:631.30px;width:68.00px;height:1.90px;background:#747474;border-radius:1px;"></div>
<div class="r" style="left:922.90px;top:628.50px;width:7.20px;height:7.20px;background:#cdcdcd;border-radius:3.6px;"></div>
<div class="r" style="left:880.20px;top:631.50px;width:5.60px;height:1.50px;background:#e6e6e6;"></div>
<div class="r" style="left:967.00px;top:631.50px;width:5.80px;height:1.50px;background:#e6e6e6;"></div>
<div class="r" style="left:969.15px;top:629.40px;width:1.50px;height:5.80px;background:#e6e6e6;"></div>
<svg class="r" style="left:805.80px;top:626.70px;" width="10" height="10" viewBox="0 0 10 10"><rect x="0.6" y="0.6" width="8.8" height="8.8" fill="none" stroke="#e4e4e4" stroke-width="0.9"/><path d="M0.6 3.5 H9.4 M0.6 6.4 H9.4 M3.5 0.6 V9.4 M6.4 0.6 V9.4" stroke="#e4e4e4" stroke-width="0.9"/></svg>
<svg class="r" style="left:831.20px;top:626.70px;" width="10" height="10" viewBox="0 0 10 10"><rect x="0.6" y="0.6" width="8.8" height="8.8" fill="none" stroke="#e4e4e4" stroke-width="0.9"/><rect x="3" y="3" width="4" height="4.4" fill="none" stroke="#e4e4e4" stroke-width="0.9"/></svg>
<svg class="r" style="left:856.60px;top:626.70px;" width="10" height="10" viewBox="0 0 10 10"><rect x="0.6" y="0.6" width="8.8" height="8.8" fill="none" stroke="#e4e4e4" stroke-width="0.9"/><path d="M0.6 5.6 H9.4 M4 0.6 V5.6" stroke="#e4e4e4" stroke-width="0.9"/></svg>
</div>
</body>
</html>
